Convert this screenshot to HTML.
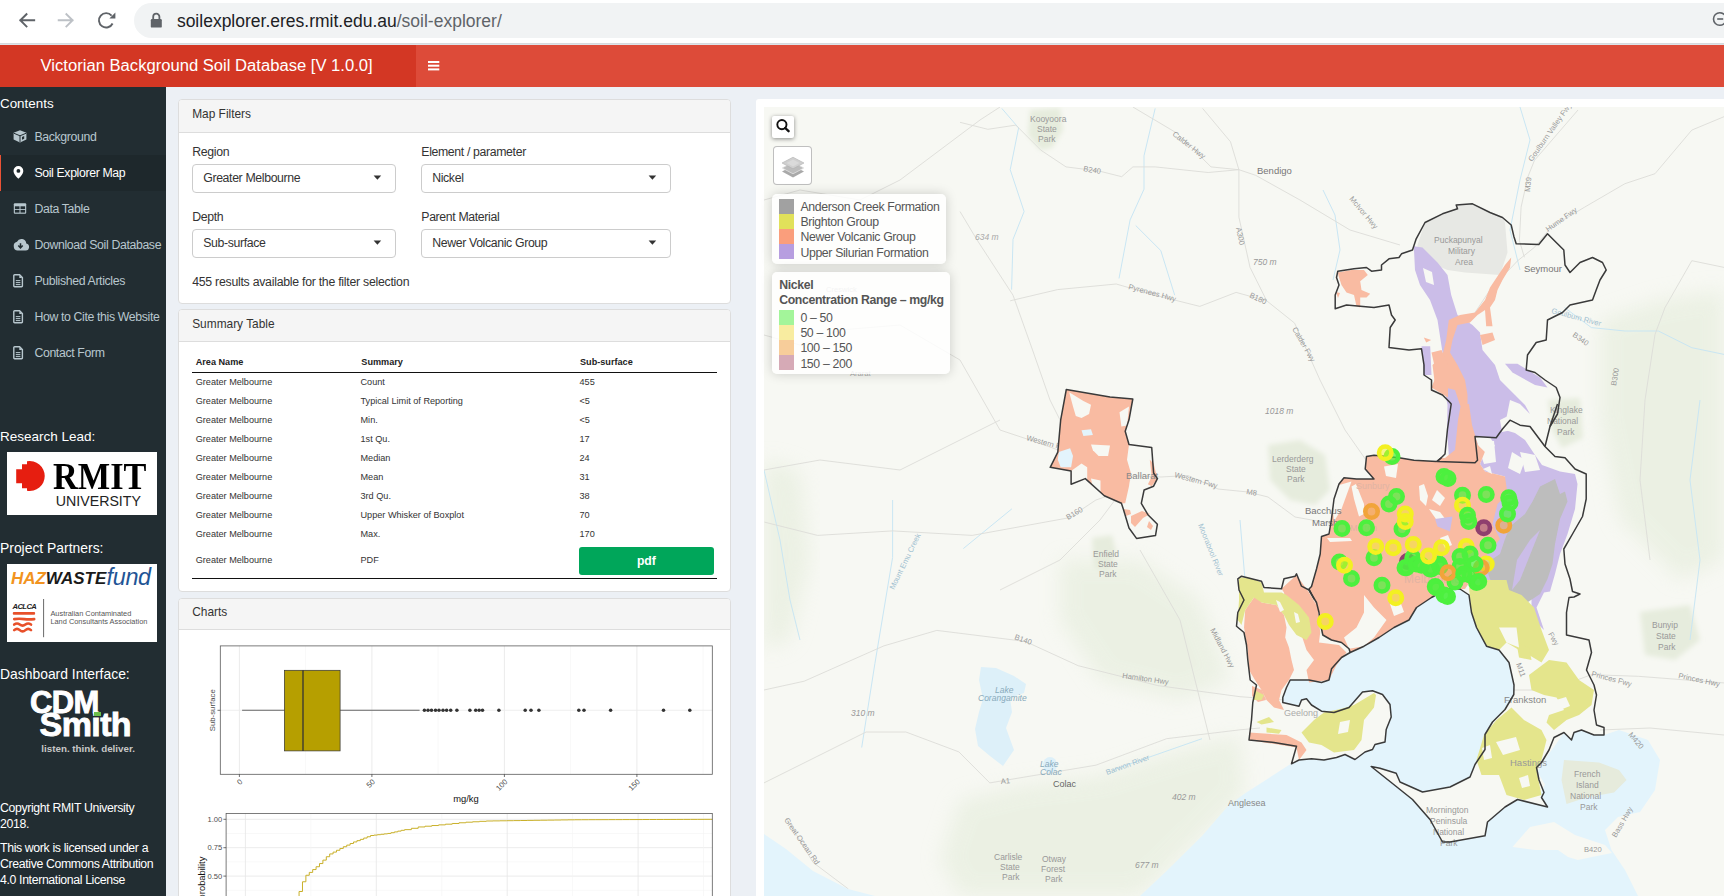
<!DOCTYPE html><html><head><meta charset="utf-8"><style>
html,body{margin:0;padding:0;width:1724px;height:896px;overflow:hidden;background:#ecf0f5;position:relative;font-family:'Liberation Sans',sans-serif}
.t{position:absolute;white-space:nowrap}
svg{position:absolute;overflow:visible}
</style></head><body>
<div style="position:absolute;left:0px;top:0px;width:1724px;height:43px;background:#fff"></div>
<div style="position:absolute;left:0px;top:43px;width:1724px;height:1px;background:#d6d9dd"></div>
<div style="position:absolute;left:0px;top:44px;width:1724px;height:1px;background:#dde3e8"></div>
<div style="position:absolute;left:134px;top:3px;width:1700px;height:35px;background:#f1f3f4;border-radius:17.5px"></div>
<svg style="left:0;top:0" width="140" height="43" viewBox="0 0 140 43">
<g fill="none" stroke-linecap="square">
<path d="M34.2 20.3H20.5M26.5 14.2L20.3 20.3L26.5 26.4" stroke="#5f6368" stroke-width="1.9"/>
<path d="M58.7 20.3H72.4M66.4 14.2L72.6 20.3L66.4 26.4" stroke="#bdc1c6" stroke-width="1.9"/>
<path d="M112.6 23.5A7.2 7.2 0 1 1 111.6 15.6" stroke="#5f6368" stroke-width="1.9" stroke-linecap="butt"/>
</g>
<path d="M115.4 12.6V18.6H109.4Z" fill="#5f6368"/>
</svg>
<svg style="left:0;top:0" width="170" height="43"><g fill="#5f6368"><rect x="150.8" y="19" width="11" height="8.6" rx="1.2"/><path d="M153.2 19.5V16.8A3.1 3.1 0 0 1 159.4 16.8V19.5" fill="none" stroke="#5f6368" stroke-width="1.8"/></g></svg>
<div class="t" style="left:176.9px;top:9.84px;font:400 17.5px/22px 'Liberation Sans',sans-serif;color:#202124;"><span style="color:#202124">soilexplorer.eres.rmit.edu.au</span><span style="color:#5f6368">/soil-explorer/</span></div>
<svg style="left:1700px;top:0" width="24" height="43"><circle cx="19.8" cy="19" r="6.3" fill="none" stroke="#5f6368" stroke-width="1.6"/><path d="M17.2 19H23.2" stroke="#5f6368" stroke-width="1.6"/></svg>
<div style="position:absolute;left:0px;top:45px;width:416px;height:42px;background:#d33724"></div>
<div style="position:absolute;left:416px;top:45px;width:1308px;height:42px;background:#dd4b39"></div>
<div class="t" style="left:40.6px;top:54.74px;font:400 16.62px/21px 'Liberation Sans',sans-serif;color:#fff;">Victorian Background Soil Database [V 1.0.0]</div>
<svg style="left:420px;top:55px" width="24" height="24"><g fill="#fff"><rect x="8" y="6" width="11.3" height="2"/><rect x="8" y="9.7" width="11.3" height="2"/><rect x="8" y="13.4" width="11.3" height="2"/></g></svg>
<div style="position:absolute;left:0px;top:87px;width:166px;height:809px;background:#222d32"></div>
<div class="t" style="left:0px;top:94.76px;font:400 13.4px/17px 'Liberation Sans',sans-serif;color:#fff;">Contents</div>
<div style="position:absolute;left:0px;top:155px;width:166px;height:36px;background:#1e282c"></div>
<div style="position:absolute;left:0px;top:155px;width:1.25px;height:36px;background:#ea5235"></div>
<div class="t" style="left:34.4px;top:128.84px;font:400 12.3px/16px 'Liberation Sans',sans-serif;color:#b8c7ce;letter-spacing:-0.36px;">Background</div>
<div class="t" style="left:34.4px;top:164.84px;font:400 12.3px/16px 'Liberation Sans',sans-serif;color:#fff;letter-spacing:-0.36px;">Soil Explorer Map</div>
<div class="t" style="left:34.4px;top:200.84px;font:400 12.3px/16px 'Liberation Sans',sans-serif;color:#b8c7ce;letter-spacing:-0.36px;">Data Table</div>
<div class="t" style="left:34.4px;top:236.84px;font:400 12.3px/16px 'Liberation Sans',sans-serif;color:#b8c7ce;letter-spacing:-0.36px;">Download Soil Database</div>
<div class="t" style="left:34.4px;top:272.84px;font:400 12.3px/16px 'Liberation Sans',sans-serif;color:#b8c7ce;letter-spacing:-0.36px;">Published Articles</div>
<div class="t" style="left:34.4px;top:308.84px;font:400 12.3px/16px 'Liberation Sans',sans-serif;color:#b8c7ce;letter-spacing:-0.36px;">How to Cite this Website</div>
<div class="t" style="left:34.4px;top:344.84px;font:400 12.3px/16px 'Liberation Sans',sans-serif;color:#b8c7ce;letter-spacing:-0.36px;">Contact Form</div>
<svg style="left:0;top:120px" width="40" height="250" viewBox="0 120 40 250">
<g fill="#b8c7ce">
<path d="M20 130.2L26.4 132.8V139.6L20 142.4L13.6 139.6V132.8Z"/>
</g>
<path d="M13.8 133.2L20 135.8L26.2 133.2M20 135.8V142" stroke="#222d32" stroke-width="1" fill="none"/>
<path d="M22 137l2.2-0.9v2.6l-2.2 1z" fill="#222d32"/>
<path d="M18.4 166A4.9 4.9 0 0 0 13.5 170.9C13.5 174.4 18.4 178.7 18.4 178.7C18.4 178.7 23.3 174.4 23.3 170.9A4.9 4.9 0 0 0 18.4 166Z" fill="#fff"/>
<circle cx="18.4" cy="170.9" r="1.9" fill="#1e282c"/>
<g fill="#b8c7ce"><rect x="13.8" y="203.2" width="12.4" height="10.5" rx="1"/></g>
<g fill="#222d32"><rect x="14.9" y="206.3" width="4.6" height="2.8"/><rect x="20.5" y="206.3" width="4.6" height="2.8"/><rect x="14.9" y="210" width="4.6" height="2.6"/><rect x="20.5" y="210" width="4.6" height="2.6"/></g>
<path d="M17.5 250.5H25.7A3.6 3.6 0 0 0 26.3 243.4A4.9 4.9 0 0 0 17 241.8A4.4 4.4 0 0 0 13.8 246.8A3.6 3.6 0 0 0 17.5 250.5Z" fill="#b8c7ce"/>
<path d="M20.5 243.2V247.5M18.3 245.6L20.5 248L22.7 245.6" stroke="#222d32" stroke-width="1.5" fill="none"/>
</svg>
<svg style="left:13.4px;top:274.2px" width="11" height="14"><path d="M1.6 0.8H6.6L9.4 3.6V11.9A0.8 0.8 0 0 1 8.6 12.7H1.6A0.8 0.8 0 0 1 0.8 11.9V1.6A0.8 0.8 0 0 1 1.6 0.8Z" fill="none" stroke="#b8c7ce" stroke-width="1.4"/><path d="M6.3 0.9V3.9H9.3Z" fill="#b8c7ce"/><path d="M2.8 6.6H7.4M2.8 8.6H7.4M2.8 10.6H7.4" stroke="#b8c7ce" stroke-width="1"/></svg>
<svg style="left:13.4px;top:310.2px" width="11" height="14"><path d="M1.6 0.8H6.6L9.4 3.6V11.9A0.8 0.8 0 0 1 8.6 12.7H1.6A0.8 0.8 0 0 1 0.8 11.9V1.6A0.8 0.8 0 0 1 1.6 0.8Z" fill="none" stroke="#b8c7ce" stroke-width="1.4"/><path d="M6.3 0.9V3.9H9.3Z" fill="#b8c7ce"/><path d="M2.8 6.6H7.4M2.8 8.6H7.4M2.8 10.6H7.4" stroke="#b8c7ce" stroke-width="1"/></svg>
<svg style="left:13.4px;top:346.2px" width="11" height="14"><path d="M1.6 0.8H6.6L9.4 3.6V11.9A0.8 0.8 0 0 1 8.6 12.7H1.6A0.8 0.8 0 0 1 0.8 11.9V1.6A0.8 0.8 0 0 1 1.6 0.8Z" fill="none" stroke="#b8c7ce" stroke-width="1.4"/><path d="M6.3 0.9V3.9H9.3Z" fill="#b8c7ce"/><path d="M2.8 6.6H7.4M2.8 8.6H7.4M2.8 10.6H7.4" stroke="#b8c7ce" stroke-width="1"/></svg>
<div class="t" style="left:0px;top:427.72px;font:400 13.5px/17px 'Liberation Sans',sans-serif;color:#fff;">Research Lead:</div>
<div class="t" style="left:0px;top:538.88px;font:400 13.9px/18px 'Liberation Sans',sans-serif;color:#fff;">Project Partners:</div>
<div class="t" style="left:0px;top:664.93px;font:400 13.9px/18px 'Liberation Sans',sans-serif;color:#fff;">Dashboard Interface:</div>
<div class="t" style="left:0px;top:799.64px;font:400 12.3px/16px 'Liberation Sans',sans-serif;color:#fff;letter-spacing:-0.36px;">Copyright RMIT University</div>
<div class="t" style="left:0px;top:815.64px;font:400 12.3px/16px 'Liberation Sans',sans-serif;color:#fff;letter-spacing:-0.36px;">2018.</div>
<div class="t" style="left:0px;top:840.04px;font:400 12.3px/16px 'Liberation Sans',sans-serif;color:#fff;letter-spacing:-0.36px;">This work is licensed under a</div>
<div class="t" style="left:0px;top:856.14px;font:400 12.3px/16px 'Liberation Sans',sans-serif;color:#fff;letter-spacing:-0.36px;">Creative Commons Attribution</div>
<div class="t" style="left:0px;top:872.34px;font:400 12.3px/16px 'Liberation Sans',sans-serif;color:#fff;letter-spacing:-0.36px;">4.0 International License</div>
<div style="position:absolute;left:7px;top:452px;width:150px;height:63px;background:#fff"></div>
<svg style="left:7px;top:452px" width="150" height="63">
<path d="M20 9.3A15 15 0 1 1 20 38.8V36.3H15V31.3H9.2V17.3H15V12.3H20Z" fill="#e61e10"/>
</svg>
<div class="t" style="left:52.8px;top:452.54px;font:700 37.5px/47px 'Liberation Serif',sans-serif;color:#000;transform:scaleX(0.915);transform-origin:left;letter-spacing:0px">RMIT</div>
<div class="t" style="left:55.8px;top:491.68px;font:400 14.2px/18px 'Liberation Sans',sans-serif;color:#222;letter-spacing:0px">UNIVERSITY</div>
<div style="position:absolute;left:7px;top:564px;width:150px;height:78px;background:#fff"></div>
<div class="t" style="left:10.9px;top:567.91px;font:700 17px/22px 'Liberation Sans',sans-serif;color:#333;font-style:italic;letter-spacing:0px"><span style="color:#f29320">HAZ</span><span style="color:#1a1a1a">WASTE</span></div>
<div class="t" style="left:106.5px;top:561.69px;font:400 23.4px/30px 'Liberation Sans',sans-serif;color:#1f5596;font-style:italic;letter-spacing:-0.3px">fund</div>
<svg style="left:7px;top:564px" width="150" height="78">
<rect x="5.8" y="48.1" width="22.3" height="2.7" rx="1" fill="#e8502a"/>
<g fill="none" stroke="#e8502a" stroke-width="2.6" stroke-linecap="round">
<path d="M7.2 55.1q5 -0.6 10 0t10 0"/>
<path d="M7.2 60.6q2.8-2.2 5.6 0t5.6 0t5.6 0"/>
<path d="M7.2 66.1q2.8-2.6 5.6 0t5.6 0t5.6 0"/>
</g>
<rect x="36" y="35" width="1.1" height="38.2" fill="#777"/>
</svg>
<div class="t" style="left:12.6px;top:602.17px;font:700 7.6px/10px 'Liberation Sans',sans-serif;color:#222;letter-spacing:-0.6px;font-style:italic">ACLCA</div>
<div class="t" style="left:50.4px;top:608.54px;font:400 7.4px/10px 'Liberation Sans',sans-serif;color:#555;">Australian Contaminated</div>
<div class="t" style="left:50.4px;top:617.04px;font:400 7.4px/10px 'Liberation Sans',sans-serif;color:#555;">Land Consultants Association</div>
<div class="t" style="left:29.9px;top:682.76px;font:700 31px/39px 'Liberation Sans',sans-serif;color:#fff;letter-spacing:-0.6px;-webkit-text-stroke:0.9px #fff">CDM</div>
<div class="t" style="left:39.6px;top:702.62px;font:700 34px/43px 'Liberation Sans',sans-serif;color:#fff;letter-spacing:-0.6px;-webkit-text-stroke:0.9px #fff">Smith</div>
<div style="position:absolute;left:94px;top:711.5px;width:7px;height:4px;background:#6abf4b"></div>
<div class="t" style="left:41.3px;top:741.80px;font:700 9.8px/13px 'Liberation Sans',sans-serif;color:#c8c8c8;letter-spacing:0px">listen. think. deliver.</div>
<div style="position:absolute;left:178px;top:99px;width:553px;height:205px;background:#fff;border:1px solid #ddd;box-sizing:border-box;border-radius:4px"></div>
<div style="position:absolute;left:179px;top:100px;width:551px;height:32px;background:#f5f5f5;border-bottom:1px solid #ddd;border-radius:3px 3px 0 0"></div>
<div class="t" style="left:192.2px;top:107.18px;font:400 11.9px/15px 'Liberation Sans',sans-serif;color:#333;">Map Filters</div>
<div style="position:absolute;left:178px;top:309px;width:553px;height:283px;background:#fff;border:1px solid #ddd;box-sizing:border-box;border-radius:4px"></div>
<div style="position:absolute;left:179px;top:310px;width:551px;height:31px;background:#f5f5f5;border-bottom:1px solid #ddd;border-radius:3px 3px 0 0"></div>
<div class="t" style="left:192.2px;top:316.78px;font:400 11.9px/15px 'Liberation Sans',sans-serif;color:#333;">Summary Table</div>
<div style="position:absolute;left:178px;top:598px;width:553px;height:322px;background:#fff;border:1px solid #ddd;box-sizing:border-box;border-radius:4px"></div>
<div style="position:absolute;left:179px;top:599px;width:551px;height:30px;background:#f5f5f5;border-bottom:1px solid #ddd;border-radius:3px 3px 0 0"></div>
<div class="t" style="left:192.2px;top:605.28px;font:400 11.9px/15px 'Liberation Sans',sans-serif;color:#333;">Charts</div>
<div class="t" style="left:192.3px;top:143.84px;font:400 12.3px/16px 'Liberation Sans',sans-serif;color:#333;letter-spacing:-0.36px;">Region</div>
<div class="t" style="left:421.3px;top:143.84px;font:400 12.3px/16px 'Liberation Sans',sans-serif;color:#333;letter-spacing:-0.36px;">Element / parameter</div>
<div style="position:absolute;left:192px;top:164px;width:204px;height:28.5px;background:#fff;border:1px solid #ccc;box-sizing:border-box;border-radius:4px"></div>
<div class="t" style="left:203.2px;top:170.04px;font:400 12.3px/16px 'Liberation Sans',sans-serif;color:#333;letter-spacing:-0.36px;">Greater Melbourne</div>
<svg style="left:373px;top:175px" width="10" height="6"><path d="M0.6 0.6H8.2L4.4 4.8Z" fill="#333"/></svg>
<div style="position:absolute;left:421px;top:164.3px;width:250px;height:28.5px;background:#fff;border:1px solid #ccc;box-sizing:border-box;border-radius:4px"></div>
<div class="t" style="left:432.2px;top:170.44px;font:400 12.3px/16px 'Liberation Sans',sans-serif;color:#333;letter-spacing:-0.36px;">Nickel</div>
<svg style="left:648px;top:175.3px" width="10" height="6"><path d="M0.6 0.6H8.2L4.4 4.8Z" fill="#333"/></svg>
<div class="t" style="left:192.3px;top:209.14px;font:400 12.3px/16px 'Liberation Sans',sans-serif;color:#333;letter-spacing:-0.36px;">Depth</div>
<div class="t" style="left:421.3px;top:209.14px;font:400 12.3px/16px 'Liberation Sans',sans-serif;color:#333;letter-spacing:-0.36px;">Parent Material</div>
<div style="position:absolute;left:192px;top:229.3px;width:204px;height:28.5px;background:#fff;border:1px solid #ccc;box-sizing:border-box;border-radius:4px"></div>
<div class="t" style="left:203.2px;top:235.24px;font:400 12.3px/16px 'Liberation Sans',sans-serif;color:#333;letter-spacing:-0.36px;">Sub-surface</div>
<svg style="left:373px;top:240.3px" width="10" height="6"><path d="M0.6 0.6H8.2L4.4 4.8Z" fill="#333"/></svg>
<div style="position:absolute;left:421px;top:229.3px;width:250px;height:28.5px;background:#fff;border:1px solid #ccc;box-sizing:border-box;border-radius:4px"></div>
<div class="t" style="left:432.2px;top:235.24px;font:400 12.3px/16px 'Liberation Sans',sans-serif;color:#333;letter-spacing:-0.36px;">Newer Volcanic Group</div>
<svg style="left:648px;top:240.3px" width="10" height="6"><path d="M0.6 0.6H8.2L4.4 4.8Z" fill="#333"/></svg>
<div class="t" style="left:192.2px;top:274.04px;font:400 12.3px/16px 'Liberation Sans',sans-serif;color:#333;letter-spacing:-0.36px;letter-spacing:-0.26px">455 results available for the filter selection</div>
<div class="t" style="left:195.7px;top:355.83px;font:700 9.15px/12px 'Liberation Sans',sans-serif;color:#222;">Area Name</div>
<div class="t" style="left:361.3px;top:355.83px;font:700 9.15px/12px 'Liberation Sans',sans-serif;color:#222;">Summary</div>
<div class="t" style="left:580px;top:355.83px;font:700 9.15px/12px 'Liberation Sans',sans-serif;color:#222;">Sub-surface</div>
<div style="position:absolute;left:192px;top:372px;width:524.5px;height:1.3px;background:#111"></div>
<div class="t" style="left:195.7px;top:375.63px;font:400 9.15px/12px 'Liberation Sans',sans-serif;color:#333;">Greater Melbourne</div>
<div class="t" style="left:360.5px;top:375.63px;font:400 9.15px/12px 'Liberation Sans',sans-serif;color:#333;">Count</div>
<div class="t" style="left:579.5px;top:375.63px;font:400 9.15px/12px 'Liberation Sans',sans-serif;color:#333;">455</div>
<div class="t" style="left:195.7px;top:394.71px;font:400 9.15px/12px 'Liberation Sans',sans-serif;color:#333;">Greater Melbourne</div>
<div class="t" style="left:360.5px;top:394.71px;font:400 9.15px/12px 'Liberation Sans',sans-serif;color:#333;">Typical Limit of Reporting</div>
<div class="t" style="left:579.5px;top:394.71px;font:400 9.15px/12px 'Liberation Sans',sans-serif;color:#333;">&lt;5</div>
<div class="t" style="left:195.7px;top:413.79px;font:400 9.15px/12px 'Liberation Sans',sans-serif;color:#333;">Greater Melbourne</div>
<div class="t" style="left:360.5px;top:413.79px;font:400 9.15px/12px 'Liberation Sans',sans-serif;color:#333;">Min.</div>
<div class="t" style="left:579.5px;top:413.79px;font:400 9.15px/12px 'Liberation Sans',sans-serif;color:#333;">&lt;5</div>
<div class="t" style="left:195.7px;top:432.87px;font:400 9.15px/12px 'Liberation Sans',sans-serif;color:#333;">Greater Melbourne</div>
<div class="t" style="left:360.5px;top:432.87px;font:400 9.15px/12px 'Liberation Sans',sans-serif;color:#333;">1st Qu.</div>
<div class="t" style="left:579.5px;top:432.87px;font:400 9.15px/12px 'Liberation Sans',sans-serif;color:#333;">17</div>
<div class="t" style="left:195.7px;top:451.95px;font:400 9.15px/12px 'Liberation Sans',sans-serif;color:#333;">Greater Melbourne</div>
<div class="t" style="left:360.5px;top:451.95px;font:400 9.15px/12px 'Liberation Sans',sans-serif;color:#333;">Median</div>
<div class="t" style="left:579.5px;top:451.95px;font:400 9.15px/12px 'Liberation Sans',sans-serif;color:#333;">24</div>
<div class="t" style="left:195.7px;top:471.03px;font:400 9.15px/12px 'Liberation Sans',sans-serif;color:#333;">Greater Melbourne</div>
<div class="t" style="left:360.5px;top:471.03px;font:400 9.15px/12px 'Liberation Sans',sans-serif;color:#333;">Mean</div>
<div class="t" style="left:579.5px;top:471.03px;font:400 9.15px/12px 'Liberation Sans',sans-serif;color:#333;">31</div>
<div class="t" style="left:195.7px;top:490.11px;font:400 9.15px/12px 'Liberation Sans',sans-serif;color:#333;">Greater Melbourne</div>
<div class="t" style="left:360.5px;top:490.11px;font:400 9.15px/12px 'Liberation Sans',sans-serif;color:#333;">3rd Qu.</div>
<div class="t" style="left:579.5px;top:490.11px;font:400 9.15px/12px 'Liberation Sans',sans-serif;color:#333;">38</div>
<div class="t" style="left:195.7px;top:509.19px;font:400 9.15px/12px 'Liberation Sans',sans-serif;color:#333;">Greater Melbourne</div>
<div class="t" style="left:360.5px;top:509.19px;font:400 9.15px/12px 'Liberation Sans',sans-serif;color:#333;">Upper Whisker of Boxplot</div>
<div class="t" style="left:579.5px;top:509.19px;font:400 9.15px/12px 'Liberation Sans',sans-serif;color:#333;">70</div>
<div class="t" style="left:195.7px;top:528.27px;font:400 9.15px/12px 'Liberation Sans',sans-serif;color:#333;">Greater Melbourne</div>
<div class="t" style="left:360.5px;top:528.27px;font:400 9.15px/12px 'Liberation Sans',sans-serif;color:#333;">Max.</div>
<div class="t" style="left:579.5px;top:528.27px;font:400 9.15px/12px 'Liberation Sans',sans-serif;color:#333;">170</div>
<div class="t" style="left:195.7px;top:553.73px;font:400 9.15px/12px 'Liberation Sans',sans-serif;color:#333;">Greater Melbourne</div>
<div class="t" style="left:360.5px;top:553.73px;font:400 9.15px/12px 'Liberation Sans',sans-serif;color:#333;">PDF</div>
<div style="position:absolute;left:579.2px;top:547px;width:134.5px;height:27.5px;background:#00a65a;border-radius:3px"></div>
<div class="t" style="left:616.4px;width:60px;text-align:center;top:552.97px;font:700 12.2px/16px 'Liberation Sans',sans-serif;color:#fff;">pdf</div>
<div style="position:absolute;left:192px;top:578px;width:524.5px;height:1.3px;background:#111"></div>
<svg style="left:179px;top:630px" width="551" height="266" viewBox="179 630 551 266"><g font-family="Liberation Sans">
<rect x="220.3" y="645.9" width="492" height="128.4" fill="#fff"/>
<line x1="305.6" y1="645.9" x2="305.6" y2="774.3" stroke="#f3f3f3" stroke-width="0.6"/>
<line x1="438.1" y1="645.9" x2="438.1" y2="774.3" stroke="#f3f3f3" stroke-width="0.6"/>
<line x1="570.6" y1="645.9" x2="570.6" y2="774.3" stroke="#f3f3f3" stroke-width="0.6"/>
<line x1="703.1" y1="645.9" x2="703.1" y2="774.3" stroke="#f3f3f3" stroke-width="0.6"/>
<line x1="239.4" y1="645.9" x2="239.4" y2="774.3" stroke="#e6e6e6" stroke-width="0.8"/>
<line x1="371.9" y1="645.9" x2="371.9" y2="774.3" stroke="#e6e6e6" stroke-width="0.8"/>
<line x1="504.4" y1="645.9" x2="504.4" y2="774.3" stroke="#e6e6e6" stroke-width="0.8"/>
<line x1="636.9" y1="645.9" x2="636.9" y2="774.3" stroke="#e6e6e6" stroke-width="0.8"/>
<line x1="220.3" y1="710.3" x2="712.3" y2="710.3" stroke="#ebebeb" stroke-width="0.8"/>
<line x1="242.1" y1="710.3" x2="284.4" y2="710.3" stroke="#666" stroke-width="1.1"/>
<line x1="340.1" y1="710.3" x2="419.6" y2="710.3" stroke="#666" stroke-width="1.1"/>
<rect x="284.4" y="670.3" width="55.7" height="80.6" fill="#b69f00" stroke="#333" stroke-width="0.7"/>
<line x1="303.0" y1="670.3" x2="303.0" y2="750.9" stroke="#333" stroke-width="1.3"/>
<circle cx="424.4" cy="710.3" r="1.75" fill="#333"/>
<circle cx="428" cy="710.3" r="1.75" fill="#333"/>
<circle cx="431.5" cy="710.3" r="1.75" fill="#333"/>
<circle cx="435.5" cy="710.3" r="1.75" fill="#333"/>
<circle cx="439" cy="710.3" r="1.75" fill="#333"/>
<circle cx="443" cy="710.3" r="1.75" fill="#333"/>
<circle cx="446.6" cy="710.3" r="1.75" fill="#333"/>
<circle cx="450.7" cy="710.3" r="1.75" fill="#333"/>
<circle cx="456.9" cy="710.3" r="1.75" fill="#333"/>
<circle cx="469.9" cy="710.3" r="1.75" fill="#333"/>
<circle cx="475.7" cy="710.3" r="1.75" fill="#333"/>
<circle cx="479.1" cy="710.3" r="1.75" fill="#333"/>
<circle cx="482.5" cy="710.3" r="1.75" fill="#333"/>
<circle cx="498.9" cy="710.3" r="1.75" fill="#333"/>
<circle cx="525.2" cy="710.3" r="1.75" fill="#333"/>
<circle cx="531" cy="710.3" r="1.75" fill="#333"/>
<circle cx="538.9" cy="710.3" r="1.75" fill="#333"/>
<circle cx="578.8" cy="710.3" r="1.75" fill="#333"/>
<circle cx="584" cy="710.3" r="1.75" fill="#333"/>
<circle cx="610.6" cy="710.3" r="1.75" fill="#333"/>
<circle cx="663.5" cy="710.3" r="1.75" fill="#333"/>
<circle cx="689.8" cy="710.3" r="1.75" fill="#333"/>
<rect x="220.3" y="645.9" width="492" height="128.4" fill="none" stroke="#5a5a5a" stroke-width="0.8"/>
<line x1="217.5" y1="710.3" x2="220.3" y2="710.3" stroke="#333" stroke-width="0.7"/>
<line x1="239.4" y1="774.3" x2="239.4" y2="777" stroke="#333" stroke-width="0.7"/>
<text x="0" y="0" font-size="7.6" fill="#4d4d4d" text-anchor="end" transform="translate(243.0 782.3) rotate(-45)">0</text>
<line x1="371.9" y1="774.3" x2="371.9" y2="777" stroke="#333" stroke-width="0.7"/>
<text x="0" y="0" font-size="7.6" fill="#4d4d4d" text-anchor="end" transform="translate(375.5 782.3) rotate(-45)">50</text>
<line x1="504.4" y1="774.3" x2="504.4" y2="777" stroke="#333" stroke-width="0.7"/>
<text x="0" y="0" font-size="7.6" fill="#4d4d4d" text-anchor="end" transform="translate(508.0 782.3) rotate(-45)">100</text>
<line x1="636.9" y1="774.3" x2="636.9" y2="777" stroke="#333" stroke-width="0.7"/>
<text x="0" y="0" font-size="7.6" fill="#4d4d4d" text-anchor="end" transform="translate(640.5 782.3) rotate(-45)">150</text>
<text x="0" y="0" font-size="7.8" fill="#4d4d4d" text-anchor="middle" transform="translate(214.8 710.3) rotate(-90)">Sub-surface</text>
<text x="466" y="801.7" font-size="9.4" fill="#111" text-anchor="middle">mg/kg</text>
<rect x="226.1" y="813.4" width="486.2" height="90" fill="#fff"/>
<line x1="226.1" y1="833.5" x2="712.3" y2="833.5" stroke="#f3f3f3" stroke-width="0.6"/>
<line x1="226.1" y1="861.9" x2="712.3" y2="861.9" stroke="#f3f3f3" stroke-width="0.6"/>
<line x1="226.1" y1="890.3" x2="712.3" y2="890.3" stroke="#f3f3f3" stroke-width="0.6"/>
<line x1="226.1" y1="819.3" x2="712.3" y2="819.3" stroke="#e6e6e6" stroke-width="0.8"/>
<line x1="226.1" y1="847.7" x2="712.3" y2="847.7" stroke="#e6e6e6" stroke-width="0.8"/>
<line x1="226.1" y1="876.1" x2="712.3" y2="876.1" stroke="#e6e6e6" stroke-width="0.8"/>
<line x1="226.1" y1="904.5" x2="712.3" y2="904.5" stroke="#e6e6e6" stroke-width="0.8"/>
<line x1="310.9" y1="813.4" x2="310.9" y2="900" stroke="#f3f3f3" stroke-width="0.6"/>
<line x1="441.8" y1="813.4" x2="441.8" y2="900" stroke="#f3f3f3" stroke-width="0.6"/>
<line x1="572.6" y1="813.4" x2="572.6" y2="900" stroke="#f3f3f3" stroke-width="0.6"/>
<line x1="703.5" y1="813.4" x2="703.5" y2="900" stroke="#f3f3f3" stroke-width="0.6"/>
<line x1="245.4" y1="813.4" x2="245.4" y2="900" stroke="#e6e6e6" stroke-width="0.8"/>
<line x1="376.3" y1="813.4" x2="376.3" y2="900" stroke="#e6e6e6" stroke-width="0.8"/>
<line x1="507.2" y1="813.4" x2="507.2" y2="900" stroke="#e6e6e6" stroke-width="0.8"/>
<line x1="638.1" y1="813.4" x2="638.1" y2="900" stroke="#e6e6e6" stroke-width="0.8"/>
<clipPath id="ec"><rect x="226.1" y="813.4" width="486.2" height="100"/></clipPath>
<path d="M248.02 932.90 H251.42 V931.85 H254.82 V930.79 H258.23 V929.74 H261.63 V928.68 H265.04 V927.63 H268.44 V925.95 H271.84 V923.88 H275.25 V921.81 H278.65 V919.75 H282.05 V915.58 H285.46 V910.78 H288.86 V905.98 H292.26 V901.86 H295.67 V898.04 H299.07 V891.50 H302.47 V881.78 H305.88 V875.25 H309.28 V872.41 H312.68 V869.57 H316.09 V866.74 H319.49 V863.55 H322.89 V860.14 H326.30 V856.73 H329.70 V853.93 H333.10 V852.10 H336.51 V850.28 H339.91 V848.46 H343.31 V846.73 H346.72 V845.11 H350.12 V843.49 H353.52 V841.95 H356.93 V840.65 H360.33 V839.35 H363.73 V838.05 H367.14 V836.75 H370.54 V835.51 H373.94 V835.10 H377.35 V834.69 H380.75 V834.28 H384.15 V833.86 H387.56 V833.45 H390.96 V832.71 H394.36 V831.91 H397.77 V831.12 H401.17 V830.32 H404.57 V829.65 H411.38 V828.30 H418.19 V826.95 H424.99 V826.21 H431.80 V825.54 H438.61 V824.87 H445.42 V824.18 H452.22 V823.48 H459.03 V822.77 H465.84 V822.19 H472.64 V821.77 H479.45 V821.34 H486.26 V820.99 H493.06 V820.89 H499.87 V820.79 H506.68 V820.69 H513.48 V820.60 H520.29 V820.50 H527.10 V820.40 H533.90 V820.31 H540.71 V820.21 H547.52 V820.11 H554.32 V820.02 H561.13 V819.92 H567.94 V819.82 H574.74 V819.75 H581.55 V819.73 H588.36 V819.70 H595.16 V819.68 H601.97 V819.66 H608.78 V819.64 H615.59 V819.61 H622.39 V819.59 H629.20 V819.57 H636.01 V819.55 H642.81 V819.52 H649.62 V819.50 H656.43 V819.48 H663.23 V819.46 H670.04 V819.44 H676.85 V819.41 H683.65 V819.39 H690.46 V819.37 H697.27 V819.35 H704.07 V819.32 H710.88 V819.30 H717.69 V819.30" fill="none" stroke="#c9b02a" stroke-width="1" clip-path="url(#ec)"/>
<rect x="226.1" y="813.4" width="486.2" height="100" fill="none" stroke="#5a5a5a" stroke-width="0.8"/>
<line x1="223.4" y1="819.3" x2="226.1" y2="819.3" stroke="#333" stroke-width="0.7"/>
<text x="222.3" y="822.0" font-size="7.6" fill="#4d4d4d" text-anchor="end">1.00</text>
<line x1="223.4" y1="847.7" x2="226.1" y2="847.7" stroke="#333" stroke-width="0.7"/>
<text x="222.3" y="850.4" font-size="7.6" fill="#4d4d4d" text-anchor="end">0.75</text>
<line x1="223.4" y1="876.1" x2="226.1" y2="876.1" stroke="#333" stroke-width="0.7"/>
<text x="222.3" y="878.8" font-size="7.6" fill="#4d4d4d" text-anchor="end">0.50</text>
<line x1="223.4" y1="904.5" x2="226.1" y2="904.5" stroke="#333" stroke-width="0.7"/>
<text x="222.3" y="907.2" font-size="7.6" fill="#4d4d4d" text-anchor="end">0.25</text>
<text x="0" y="0" font-size="9.4" fill="#111" text-anchor="start" transform="translate(205 850.4) rotate(-90) translate(-49 0)">probability</text>
</g></svg>
<div style="position:absolute;left:756px;top:99px;width:968px;height:797px;background:#fff;border-radius:3px 0 0 0"></div>
<svg style="left:764px;top:107px" width="960" height="789" viewBox="764 107 960 789"><defs><filter id="bl" x="-20%" y="-20%" width="140%" height="140%"><feGaussianBlur stdDeviation="10"/></filter><filter id="bl2" x="-20%" y="-20%" width="140%" height="140%"><feGaussianBlur stdDeviation="2.5"/></filter><clipPath id="mc"><rect x="764" y="107" width="960" height="789"/></clipPath></defs><g clip-path="url(#mc)">
<rect x="764" y="107" width="960" height="789" fill="#f7f8f3"/>
<path d="M960.0 800.0 L1020.0 785.0 L1100.0 775.0 L1180.0 750.0 L1240.0 735.0 L1244.0 794.0 L1202.0 836.0 L1166.0 871.0 L1140.0 896.0 L960.0 896.0 L940.0 860.0Z" fill="#e4ecda" opacity="0.6" filter="url(#bl)"/>
<path d="M764.0 460.0 L800.0 470.0 L810.0 560.0 L790.0 640.0 L764.0 650.0Z" fill="#e4ecda" opacity="0.6" filter="url(#bl)"/>
<path d="M1600.0 320.0 L1660.0 300.0 L1724.0 290.0 L1724.0 560.0 L1680.0 580.0 L1620.0 520.0 L1600.0 420.0Z" fill="#e4ecda" opacity="0.6" filter="url(#bl)"/>
<path d="M1060.0 560.0 L1140.0 560.0 L1200.0 600.0 L1230.0 680.0 L1180.0 700.0 L1100.0 680.0 L1060.0 620.0Z" fill="#e4ecda" opacity="0.6" filter="url(#bl)"/>
<path d="M1030.0 110.0 L1060.0 108.0 L1063.0 130.0 L1052.0 148.0 L1040.0 150.0 L1028.0 135.0Z" fill="#e6ecdd" filter="url(#bl2)"/>
<path d="M1268.0 445.0 L1300.0 440.0 L1325.0 455.0 L1330.0 490.0 L1315.0 505.0 L1290.0 500.0 L1270.0 480.0Z" fill="#e6ecdd" filter="url(#bl2)"/>
<path d="M1092.0 538.0 L1112.0 535.0 L1116.0 552.0 L1108.0 572.0 L1094.0 568.0Z" fill="#e6ecdd" filter="url(#bl2)"/>
<path d="M1548.0 400.0 L1580.0 398.0 L1583.0 438.0 L1562.0 448.0 L1552.0 430.0Z" fill="#e6ecdd" filter="url(#bl2)"/>
<path d="M1640.0 612.0 L1690.0 605.0 L1700.0 640.0 L1675.0 660.0 L1645.0 655.0Z" fill="#e6ecdd" filter="url(#bl2)"/>
<path d="M1417.5 245.0 L1425.0 222.5 L1442.5 213.8 L1457.5 208.8 L1456.2 205.0 L1472.5 203.8 L1490.0 212.5 L1502.5 217.5 L1505.0 222.5 L1507.5 252.5 L1500.0 275.0 L1465.0 272.5 L1447.5 270.0 L1417.5 257.5Z" fill="#e7e8e4"/>
<path d="M1001.8 108.4 L1018.6 127.9 L1010.2 169.7 L1024.1 211.5 L1013.0 239.4 L1011.6 289.6" fill="none" stroke="#c9e6f3" stroke-width="1"/>
<path d="M1155.2 108.4 L1144.0 155.8 L1144.0 189.2 L1130.1 219.9 L1119.0 278.5" fill="none" stroke="#c9e6f3" stroke-width="1"/>
<path d="M1135.7 225.5 L1160.8 250.6 L1174.7 295.2" fill="none" stroke="#c9e6f3" stroke-width="1"/>
<path d="M892.6 500.0 L892.6 557.5 L874.9 663.5 L861.7 747.5" fill="none" stroke="#c9e6f3" stroke-width="1"/>
<path d="M1011.9 508.8 L963.3 548.6" fill="none" stroke="#c9e6f3" stroke-width="1"/>
<path d="M1113.6 769.6 L1202.0 738.7" fill="none" stroke="#c9e6f3" stroke-width="1"/>
<path d="M1564.6 307.6 L1591.4 327.6 L1624.9 331.0 L1658.4 331.0 L1691.8 347.7 L1724.0 354.4" fill="none" stroke="#c9e6f3" stroke-width="1"/>
<path d="M764.0 470.0 L780.0 540.0 L790.0 600.0 L800.0 640.0" fill="none" stroke="#c9e6f3" stroke-width="1"/>
<path d="M1520.0 107.0 L1530.0 140.0 L1520.0 180.0 L1510.0 230.0 L1520.0 270.0" fill="none" stroke="#c9e6f3" stroke-width="1"/>
<path d="M1323.0 190.0 L1335.0 215.0 L1340.0 250.0 L1333.0 280.0" fill="none" stroke="#c9e6f3" stroke-width="1"/>
<path d="M1240.0 520.0 L1245.0 580.0 L1250.0 620.0 L1256.0 680.0" fill="none" stroke="#c9e6f3" stroke-width="1"/>
<path d="M1700.0 400.0 L1690.0 480.0 L1700.0 560.0 L1690.0 640.0" fill="none" stroke="#c9e6f3" stroke-width="1"/>
<path d="M764.0 335.0 L800.0 345.0 L840.0 330.0 L900.0 325.0 L960.0 360.0 L1000.0 430.0 L1027.0 439.0 L1050.0 447.0 L1127.0 475.5 L1161.0 477.0 L1188.0 475.5 L1218.0 489.0 L1248.0 492.0 L1268.0 497.0 L1295.0 517.0 L1340.0 525.0 L1400.0 540.0 L1450.0 570.0" fill="none" stroke="#dcdcd8" stroke-width="0.9"/>
<path d="M960.0 122.3 L987.9 129.3 L1015.8 125.1 L1040.9 150.2 L1066.0 166.9 L1099.4 171.1 L1121.7 176.7 L1132.9 166.9 L1155.2 166.9 L1208.2 172.5 L1238.9 169.7 L1255.6 175.3 L1300.0 200.0 L1350.0 230.0 L1400.0 245.0" fill="none" stroke="#dcdcd8" stroke-width="0.9"/>
<path d="M1132.9 107.0 L1177.5 133.5 L1211.0 166.9 L1238.9 169.7" fill="none" stroke="#dcdcd8" stroke-width="0.9"/>
<path d="M1202.6 108.4 L1230.5 141.8 L1238.9 169.7 L1238.9 217.1 L1250.0 267.3 L1266.7 300.8 L1294.6 323.1 L1320.0 380.0 L1345.0 430.0 L1380.0 480.0 L1420.0 530.0 L1445.0 570.0" fill="none" stroke="#dcdcd8" stroke-width="0.9"/>
<path d="M1010.2 300.8 L1057.6 289.6 L1116.2 284.0 L1155.2 295.2 L1199.8 306.4 L1236.1 292.4 L1266.7 300.8" fill="none" stroke="#dcdcd8" stroke-width="0.9"/>
<path d="M960.0 211.5 L976.7 239.4 L1013.0 295.2 L1032.5 349.9 L1050.0 400.0 L1065.0 430.0" fill="none" stroke="#dcdcd8" stroke-width="0.9"/>
<path d="M764.4 522.1 L817.5 535.4 L892.6 530.9 L972.2 535.4 L1069.4 517.7 L1095.9 500.0 L1125.0 490.0" fill="none" stroke="#dcdcd8" stroke-width="0.9"/>
<path d="M764.0 690.0 L804.2 681.2 L883.8 645.9 L936.8 630.4 L1025.2 641.4 L1078.2 665.7 L1157.8 685.6 L1240.0 696.7 L1285.0 700.0" fill="none" stroke="#dcdcd8" stroke-width="0.9"/>
<path d="M764.0 782.9 L866.1 732.0 L905.9 732.0 L958.9 751.9 L989.8 782.9 L1042.9 774.0 L1095.9 765.2 L1166.6 738.7 L1240.0 729.8 L1260.0 728.0" fill="none" stroke="#dcdcd8" stroke-width="0.9"/>
<path d="M786.5 818.2 L813.0 862.4 L848.4 889.0" fill="none" stroke="#dcdcd8" stroke-width="0.9"/>
<path d="M764.0 200.0 L800.0 190.0 L860.0 200.0 L900.0 180.0 L940.0 150.0 L980.0 120.0 L1000.0 107.0" fill="none" stroke="#dcdcd8" stroke-width="0.9"/>
<path d="M1578.0 110.0 L1534.5 160.3 L1527.8 177.0 L1521.1 207.1 L1519.4 240.6 L1524.4 257.3" fill="none" stroke="#dcdcd8" stroke-width="0.9"/>
<path d="M1724.0 116.7 L1691.8 130.1 L1655.0 173.7 L1624.9 183.7 L1584.7 207.1 L1551.2 227.2 L1534.5 247.3 L1517.7 260.7 L1490.0 290.0 L1470.0 320.0 L1455.0 360.0 L1450.0 420.0" fill="none" stroke="#dcdcd8" stroke-width="0.9"/>
<path d="M1724.0 267.4 L1691.8 260.7 L1665.0 307.6 L1655.0 334.4 L1645.0 400.0 L1640.0 480.0 L1650.0 560.0" fill="none" stroke="#dcdcd8" stroke-width="0.9"/>
<path d="M1725.0 683.0 L1638.3 676.3 L1591.4 674.7 L1550.0 690.0 L1510.0 690.0" fill="none" stroke="#dcdcd8" stroke-width="0.9"/>
<path d="M1600.0 730.0 L1650.0 728.0 L1724.0 735.0" fill="none" stroke="#dcdcd8" stroke-width="0.9"/>
<path d="M1130.0 480.0 L1100.0 520.0 L1060.0 560.0 L1000.0 590.0" fill="none" stroke="#dcdcd8" stroke-width="0.9"/>
<path d="M1140.0 550.0 L1180.0 620.0 L1200.0 700.0 L1210.0 740.0" fill="none" stroke="#dcdcd8" stroke-width="0.9"/>
<path d="M764.0 470.0 L820.0 460.0 L900.0 470.0 L1000.0 420.0" fill="none" stroke="#dcdcd8" stroke-width="0.9"/>
<path d="M764.0 834.0 L786.0 849.0 L813.0 871.0 L848.0 889.0 L875.0 896.0 L1140.0 896.0 L1166.6 871.0 L1202.0 836.0 L1228.0 806.0 L1244.0 794.0 L1269.0 778.0 L1289.0 765.0 L1299.0 760.0 L1311.5 758.8 L1324.0 760.0 L1336.5 757.5 L1345.0 754.5 L1355.0 759.5 L1365.0 752.0 L1372.5 749.5 L1371.2 766.5 L1412.5 799.5 L1430.0 819.5 L1442.5 842.0 L1450.0 842.0 L1485.0 835.8 L1487.5 822.0 L1505.0 807.0 L1517.5 799.5 L1547.5 807.0 L1540.0 794.5 L1545.0 784.5 L1537.5 772.0 L1542.5 762.0 L1554.0 747.0 L1564.0 732.5 L1571.5 740.0 L1574.0 732.5 L1581.5 730.0 L1594.0 735.0 L1604.0 735.0 L1619.0 730.0 L1648.0 740.0 L1660.0 760.0 L1655.0 790.0 L1640.0 812.0 L1618.0 817.0 L1605.0 830.0 L1611.5 850.0 L1625.0 870.0 L1638.0 896.0 L764.0 896.0Z" fill="#e3f4fc"/>
<path d="M1372.5 749.5 L1375.0 744.5 L1385.0 742.0 L1386.2 729.5 L1391.2 717.0 L1390.0 704.5 L1382.5 694.5 L1372.5 690.8 L1362.5 692.0 L1349.0 707.5 L1334.0 712.5 L1321.5 711.2 L1311.5 705.0 L1306.5 698.8 L1301.5 700.0 L1299.0 706.2 L1282.8 702.5 L1282.8 697.5 L1286.5 687.5 L1290.2 680.0 L1309.0 680.0 L1321.5 682.5 L1329.0 680.0 L1331.5 668.8 L1341.5 657.5 L1350.2 652.5 L1364.0 646.2 L1379.0 637.5 L1394.0 627.5 L1409.0 620.0 L1416.5 607.5 L1431.5 597.5 L1446.5 589.0 L1460.0 589.0 L1469.0 595.0 L1471.5 612.5 L1476.5 627.5 L1486.5 646.2 L1499.0 650.0 L1509.0 662.5 L1514.0 685.0 L1513.8 694.5 L1505.0 709.5 L1492.5 722.0 L1485.0 734.5 L1485.0 749.5 L1475.0 764.5 L1470.0 777.0 L1450.0 787.0 L1422.5 792.0 L1400.0 782.0 L1396.2 773.2 L1380.0 768.2 L1371.2 766.5Z" fill="#e3f4fc"/>
<path d="M981.0 667.0 L996.0 668.0 L1014.0 676.0 L1026.0 684.0 L1024.0 693.0 L1010.0 698.0 L1012.0 712.0 L1006.0 728.0 L1014.0 750.0 L1003.0 766.0 L990.0 756.0 L978.0 746.0 L975.0 729.0 L979.0 712.0 L983.0 699.0 L979.0 680.0Z" fill="#ddf0f9"/>
<ellipse cx="1050" cy="765" rx="7" ry="8" fill="#ddf0f9"/>
<path d="M1564.0 760.0 L1599.0 762.5 L1619.0 770.0 L1626.5 780.0 L1614.0 792.5 L1586.5 797.5 L1566.5 804.0 L1561.5 780.0Z" fill="#e6ebdc"/>
<path d="M1512.5 847.0 L1530.0 827.0 L1554.0 822.0 L1575.0 835.0 L1605.0 845.0 L1612.0 853.0 L1592.0 857.0 L1578.0 860.0 L1568.0 857.0 L1558.0 850.0 L1535.0 850.0Z" fill="#f7f8f3"/>
<path d="M1413.8 246.2 L1422.5 247.5 L1437.5 262.5 L1447.5 275.0 L1451.2 295.0 L1457.5 315.0 L1472.5 325.0 L1480.0 332.5 L1482.5 350.0 L1495.0 365.0 L1500.0 380.0 L1515.0 395.0 L1525.0 405.0 L1530.0 414.0 L1520.0 404.0 L1510.0 400.0 L1506.0 420.0 L1505.0 430.0 L1515.0 433.0 L1525.0 440.0 L1535.0 455.0 L1542.0 465.0 L1560.0 471.5 L1575.0 474.0 L1577.5 484.0 L1575.0 509.0 L1567.5 534.0 L1560.0 554.0 L1555.0 574.0 L1550.0 591.5 L1544.0 592.5 L1536.5 607.5 L1544.0 630.0 L1539.0 625.0 L1531.5 610.0 L1531.5 595.0 L1525.0 590.0 L1505.0 590.0 L1470.0 586.0 L1478.0 570.0 L1485.0 550.0 L1490.0 530.0 L1492.0 505.0 L1500.0 490.0 L1505.0 476.5 L1485.0 471.5 L1480.0 464.0 L1485.0 451.5 L1480.0 439.0 L1475.0 450.0 L1460.0 458.0 L1449.0 458.0 L1447.0 430.0 L1447.5 405.0 L1443.8 385.0 L1442.5 352.5 L1437.5 320.0 L1430.0 300.0 L1420.0 285.0 L1415.0 270.0Z" fill="#cbbde8"/>
<path d="M1505.0 363.8 L1517.5 363.8 L1540.0 377.5 L1547.5 387.5 L1535.0 385.0 L1512.5 372.5Z" fill="#cbbde8"/>
<path d="M1421.5 346.2 L1430.2 346.2 L1431.5 375.0 L1424.0 375.0Z" fill="#cbbde8"/>
<path d="M1477.0 440.0 L1494.0 441.0 L1496.0 462.0 L1484.0 464.0 L1480.0 452.0Z" fill="#f7f8f3"/>
<path d="M1520.0 452.0 L1535.0 455.0 L1540.0 470.0 L1525.0 472.0Z" fill="#f7f8f3"/>
<path d="M1423.0 268.0 L1432.0 272.0 L1434.0 285.0 L1426.0 282.0Z" fill="#f7f8f3"/>
<path d="M1500.0 420.0 L1510.0 415.0 L1512.0 430.0 L1502.0 432.0Z" fill="#f7f8f3"/>
<path d="M1512.0 452.0 L1525.0 460.0 L1520.0 474.0 L1508.0 468.0Z" fill="#f7f8f3"/>
<path d="M1548.0 500.0 L1556.0 495.0 L1552.0 520.0 L1542.0 522.0Z" fill="#f7f8f3"/>
<path d="M1540.0 486.5 L1555.0 479.0 L1560.0 494.0 L1565.0 491.5 L1567.5 501.5 L1560.0 519.0 L1555.0 544.0 L1552.5 564.0 L1547.5 579.0 L1540.0 594.0 L1525.0 604.0 L1505.0 601.5 L1495.0 589.0 L1490.0 579.0 L1485.0 564.0 L1500.0 554.0 L1505.0 539.0 L1510.0 526.5 L1525.0 514.0 L1532.5 501.5Z" fill="#bdbdbd"/>
<path d="M1517.0 560.0 L1530.0 540.0 L1540.0 530.0 L1528.0 560.0 L1520.0 580.0 L1512.0 590.0Z" fill="#cbbde8"/>
<text x="0" y="0" font-family="Liberation Sans" font-size="7.6" fill="#999" transform="translate(1172 135) rotate(38)">Calder Hwy</text>
<text x="0" y="0" font-family="Liberation Sans" font-size="7.6" fill="#999" transform="translate(1083 171) rotate(10)">B240</text>
<text x="0" y="0" font-family="Liberation Sans" font-size="7.6" fill="#999" transform="translate(1128 289) rotate(15)">Pyrenees Hwy</text>
<text x="0" y="0" font-family="Liberation Sans" font-size="7.6" fill="#999" transform="translate(1236 228) rotate(78)">A300</text>
<text x="0" y="0" font-family="Liberation Sans" font-size="7.6" fill="#999" transform="translate(1249 297) rotate(25)">B180</text>
<text x="0" y="0" font-family="Liberation Sans" font-size="7.6" fill="#999" transform="translate(1026 440) rotate(15)">Western Fwy</text>
<text x="0" y="0" font-family="Liberation Sans" font-size="7.6" fill="#999" transform="translate(1174 477) rotate(15)">Western Fwy</text>
<text x="0" y="0" font-family="Liberation Sans" font-size="7.6" fill="#999" transform="translate(1246 494) rotate(10)">M8</text>
<text x="0" y="0" font-family="Liberation Sans" font-size="7.6" fill="#999" transform="translate(1068 520) rotate(-30)">B160</text>
<text x="0" y="0" font-family="Liberation Sans" font-size="7.6" fill="#9fc0d0" transform="translate(1198 525) rotate(68)">Moorabool River</text>
<text x="0" y="0" font-family="Liberation Sans" font-size="7.6" fill="#999" transform="translate(1210 630) rotate(62)">Midland Hwy</text>
<text x="0" y="0" font-family="Liberation Sans" font-size="7.6" fill="#999" transform="translate(1122 678) rotate(8)">Hamilton Hwy</text>
<text x="0" y="0" font-family="Liberation Sans" font-size="7.6" fill="#999" transform="translate(1014 639) rotate(20)">B140</text>
<text x="0" y="0" font-family="Liberation Sans" font-size="7.6" fill="#999" transform="translate(1001 784) rotate(-5)">A1</text>
<text x="0" y="0" font-family="Liberation Sans" font-size="7.6" fill="#9fc0d0" transform="translate(1107 775) rotate(-20)">Barwon River</text>
<text x="0" y="0" font-family="Liberation Sans" font-size="7.6" fill="#9fc0d0" transform="translate(894 590) rotate(-64)">Mount Emu Creek</text>
<text x="0" y="0" font-family="Liberation Sans" font-size="7.6" fill="#999" transform="translate(784 820) rotate(55)">Great Ocean Rd</text>
<text x="0" y="0" font-family="Liberation Sans" font-size="7.6" fill="#9fc0d0" transform="translate(1551 313) rotate(15)">Goulburn River</text>
<text x="0" y="0" font-family="Liberation Sans" font-size="7.6" fill="#999" transform="translate(1572 336) rotate(35)">B340</text>
<text x="0" y="0" font-family="Liberation Sans" font-size="7.6" fill="#999" transform="translate(1548 232) rotate(-35)">Hume Fwy</text>
<text x="0" y="0" font-family="Liberation Sans" font-size="7.6" fill="#999" transform="translate(1532 162) rotate(-55)">Goulburn Valley Fwy</text>
<text x="0" y="0" font-family="Liberation Sans" font-size="7.6" fill="#999" transform="translate(1530 192) rotate(-85)">M39</text>
<text x="0" y="0" font-family="Liberation Sans" font-size="7.6" fill="#999" transform="translate(1616 386) rotate(-80)">B300</text>
<text x="0" y="0" font-family="Liberation Sans" font-size="7.6" fill="#999" transform="translate(1591 676) rotate(15)">Princes Fwy</text>
<text x="0" y="0" font-family="Liberation Sans" font-size="7.6" fill="#999" transform="translate(1678 678) rotate(12)">Princes Hwy</text>
<text x="0" y="0" font-family="Liberation Sans" font-size="7.6" fill="#999" transform="translate(1628 735) rotate(50)">M420</text>
<text x="0" y="0" font-family="Liberation Sans" font-size="7.6" fill="#999" transform="translate(1616 838) rotate(-60)">Bass Hwy</text>
<text x="0" y="0" font-family="Liberation Sans" font-size="7.6" fill="#999" transform="translate(1584 852) rotate(0)">B420</text>
<text x="0" y="0" font-family="Liberation Sans" font-size="7.6" fill="#999" transform="translate(1548 634) rotate(60)">Fwy</text>
<text x="0" y="0" font-family="Liberation Sans" font-size="7.6" fill="#999" transform="translate(1516 664) rotate(70)">M11</text>
<text x="0" y="0" font-family="Liberation Sans" font-size="7.6" fill="#999" transform="translate(1349 199) rotate(50)">McIvor Hwy</text>
<text x="0" y="0" font-family="Liberation Sans" font-size="7.6" fill="#999" transform="translate(1292 329) rotate(60)">Calder Fwy</text>
<text x="0" y="0" font-family="Liberation Sans" font-size="7.6" fill="#aaa" transform="translate(850 376) rotate(0)">Ararat</text>
<text x="0" y="0" font-family="Liberation Sans" font-size="7.6" fill="#bbb" transform="translate(826 292) rotate(0)">Creswick</text>
<path d="M1066.3 389.5 L1110.0 397.1 L1132.8 399.0 L1129.0 419.8 L1125.2 431.2 L1129.0 444.5 L1127.0 459.7 L1130.9 473.0 L1129.0 486.2 L1125.2 503.3 L1121.4 503.3 L1104.3 495.7 L1085.3 478.6 L1071.1 484.3 L1071.1 471.1 L1050.2 467.3 L1057.8 452.1 L1060.7 419.8Z" fill="#f9bba2"/>
<path d="M1149.8 459.7 L1153.6 463.5 L1157.4 478.6 L1151.7 486.2 L1147.9 484.3 L1151.7 476.8Z" fill="#f9bba2"/>
<path d="M1123.3 509.0 L1130.0 510.0 L1131.0 514.0 L1126.0 516.0Z" fill="#f9bba2"/>
<path d="M1131.0 516.0 L1142.0 511.0 L1150.0 514.0 L1143.0 518.0 L1135.0 527.0 L1131.0 523.0Z" fill="#f9bba2"/>
<path d="M1149.0 521.0 L1153.0 526.0 L1151.0 530.0 L1147.0 527.0Z" fill="#f9bba2"/>
<path d="M1366.5 456.5 L1374.0 455.2 L1399.0 457.8 L1414.0 460.2 L1436.5 461.5 L1441.2 457.8 L1445.0 458.0 L1455.0 450.0 L1458.0 420.0 L1461.0 404.0 L1469.0 404.0 L1472.0 425.0 L1478.0 445.0 L1485.0 451.5 L1480.0 464.0 L1485.0 471.5 L1505.0 476.5 L1507.5 494.0 L1497.5 504.0 L1492.5 524.0 L1500.0 539.0 L1487.5 554.0 L1475.0 574.0 L1465.0 589.0 L1446.5 589.0 L1431.5 597.5 L1416.5 607.5 L1409.0 620.0 L1394.0 627.5 L1379.0 637.5 L1364.0 646.2 L1350.2 652.5 L1349.0 648.8 L1341.5 642.5 L1331.5 640.0 L1322.8 635.0 L1320.2 622.5 L1319.0 612.5 L1314.0 599.0 L1309.0 589.0 L1311.5 586.5 L1316.5 569.0 L1320.2 554.0 L1321.5 536.5 L1329.0 534.0 L1331.5 519.0 L1334.0 499.0 L1339.0 484.0 L1344.0 477.8 L1356.5 479.0 L1374.0 479.0 L1365.2 469.0Z" fill="#f9bba2"/>
<path d="M1245.2 610.0 L1254.0 597.5 L1259.0 593.8 L1261.5 602.5 L1276.5 605.0 L1284.0 615.0 L1286.5 627.5 L1285.2 637.5 L1289.0 647.5 L1291.5 660.0 L1294.0 670.0 L1289.0 680.0 L1281.5 690.0 L1279.0 700.0 L1284.0 710.0 L1274.0 707.5 L1266.5 700.0 L1261.5 690.0 L1256.5 682.5 L1249.0 670.0 L1247.8 650.0 L1244.0 627.5Z" fill="#f9bba2"/>
<path d="M1281.5 588.8 L1296.5 575.0 L1309.0 592.5 L1317.8 607.5 L1320.2 632.5 L1319.0 642.5 L1339.0 645.0 L1346.5 652.5 L1336.5 665.0 L1329.0 680.0 L1309.0 682.5 L1306.5 670.0 L1314.0 660.0 L1306.5 650.0 L1301.5 635.0 L1291.5 620.0 L1286.5 607.5 L1284.0 592.5Z" fill="#f9bba2"/>
<path d="M1249.0 732.5 L1286.5 735.0 L1301.5 742.5 L1306.5 750.0 L1299.0 760.0 L1296.5 747.5 L1249.0 740.0Z" fill="#f9bba2"/>
<path d="M1252.0 686.0 L1262.0 690.0 L1266.0 700.0 L1258.0 702.0 L1252.0 696.0Z" fill="#f9bba2"/>
<path d="M1337.8 272.5 L1351.5 270.0 L1364.0 270.0 L1367.8 275.0 L1360.2 281.2 L1361.5 290.0 L1370.2 293.8 L1366.5 297.5 L1360.2 297.5 L1360.2 307.5 L1356.5 306.2 L1354.0 295.0 L1346.5 292.5 L1341.5 285.0 L1339.0 277.5Z" fill="#f9bba2"/>
<path d="M1336.0 292.0 L1340.0 293.0 L1338.0 298.0Z" fill="#f9bba2"/>
<path d="M1511.2 257.5 L1510.0 267.5 L1502.5 280.0 L1497.5 290.0 L1495.0 300.0 L1490.0 307.5 L1492.5 326.2 L1486.2 326.2 L1485.0 310.0 L1477.5 315.0 L1470.0 322.5 L1457.5 325.0 L1452.5 340.0 L1450.0 352.5 L1457.5 365.0 L1465.0 380.0 L1467.5 395.0 L1467.5 414.0 L1460.0 405.0 L1455.0 390.0 L1435.0 385.0 L1432.5 365.0 L1442.5 355.0 L1446.2 340.0 L1448.8 320.0 L1460.0 315.0 L1475.0 312.5 L1485.0 300.0 L1490.0 287.5 L1500.0 272.5 L1505.0 265.0Z" fill="#f9bba2"/>
<path d="M1480.0 335.0 L1492.5 332.5 L1495.0 340.0 L1482.5 345.0Z" fill="#f9bba2"/>
<path d="M1423.8 337.5 L1431.2 340.0 L1426.2 342.5Z" fill="#f9bba2"/>
<path d="M1431.5 352.5 L1441.5 350.0 L1448.0 365.0 L1448.0 397.5 L1431.5 387.5 L1436.5 375.0Z" fill="#f9bba2"/>
<path d="M1069.2 392.3 L1083.4 400.9 L1091.0 404.7 L1089.1 414.1 L1081.5 417.9 L1075.8 416.0 L1073.0 406.6Z" fill="#f7f8f3"/>
<path d="M1119.5 412.3 L1129.0 406.6 L1127.1 425.5 L1121.4 426.5Z" fill="#f7f8f3"/>
<path d="M1091.0 444.5 L1110.0 445.5 L1108.1 455.9 L1098.6 455.9 L1092.9 450.2Z" fill="#f7f8f3"/>
<path d="M1071.1 471.1 L1081.5 463.5 L1087.2 467.3 L1087.2 480.6 L1085.3 478.6 L1071.1 484.3Z" fill="#f7f8f3"/>
<path d="M1091.0 478.6 L1100.5 480.6 L1100.5 491.9 L1093.0 490.0Z" fill="#f7f8f3"/>
<path d="M1334.0 486.5 L1351.5 481.5 L1341.5 509.0 L1334.0 521.5 L1332.0 500.0Z" fill="#f7f8f3"/>
<path d="M1351.5 486.5 L1356.0 484.0 L1364.0 504.0 L1364.0 514.0 L1359.0 516.5 L1354.0 499.0Z" fill="#f7f8f3"/>
<path d="M1384.0 466.5 L1398.0 464.0 L1396.0 478.0 L1386.0 476.0Z" fill="#f7f8f3"/>
<path d="M1419.0 486.0 L1424.0 484.0 L1428.0 496.0 L1426.0 506.0 L1420.0 500.0Z" fill="#f7f8f3"/>
<path d="M1437.0 490.0 L1445.0 498.0 L1440.0 506.0 L1432.0 500.0Z" fill="#f7f8f3"/>
<path d="M1429.0 509.0 L1440.0 512.0 L1446.0 520.0 L1438.0 522.0Z" fill="#f7f8f3"/>
<path d="M1475.0 436.5 L1490.0 437.0 L1495.0 446.0 L1485.0 452.0 L1479.0 446.0Z" fill="#f7f8f3"/>
<path d="M1483.0 469.0 L1490.0 466.0 L1492.0 474.0Z" fill="#f7f8f3"/>
<path d="M1364.0 595.0 L1374.0 607.5 L1386.5 620.0 L1374.0 637.5 L1364.0 646.2 L1349.0 648.8 L1344.0 637.5 L1356.5 627.5 L1364.0 612.5Z" fill="#f7f8f3"/>
<path d="M1390.0 604.0 L1400.0 601.0 L1404.0 612.0 L1394.0 616.0Z" fill="#f7f8f3"/>
<path d="M1327.0 538.0 L1350.0 538.0 L1352.0 541.0 L1330.0 542.0Z" fill="#f7f8f3"/>
<path d="M1440.0 538.0 L1448.0 535.0 L1452.0 545.0 L1445.0 548.0Z" fill="#f7f8f3"/>
<path d="M1468.0 560.0 L1476.0 556.0 L1478.0 566.0 L1470.0 568.0Z" fill="#f7f8f3"/>
<path d="M1435.0 519.0 L1452.5 516.5 L1450.0 531.5 L1437.5 526.5Z" fill="#cbbde8"/>
<path d="M1404.0 560.0 L1412.0 558.0 L1414.0 566.0 L1406.0 568.0Z" fill="#cbbde8"/>
<path d="M1058.8 452.1L1070.1 448.3L1073 455.9L1071.1 467.3L1060.7 467.3L1057.8 459.7Z" fill="#e3f4fc"/>
<path d="M1081.5 430.3L1091 429.3L1092.9 435L1083.4 436Z" fill="#e3f4fc"/>
<path d="M1239.0 577.5 L1249.0 577.5 L1261.5 582.5 L1264.0 592.5 L1281.5 592.5 L1286.5 595.0 L1299.0 605.0 L1309.0 617.5 L1311.5 632.5 L1306.5 640.0 L1296.5 635.0 L1289.0 625.0 L1284.0 615.0 L1276.5 605.0 L1261.5 602.5 L1254.0 597.5 L1245.2 610.0 L1241.5 625.0 L1237.8 620.0 L1239.0 600.0Z" fill="#e4e58c"/>
<path d="M1301.5 732.5 L1314.0 720.0 L1324.0 712.5 L1341.5 708.8 L1354.0 705.0 L1366.5 697.5 L1374.0 693.0 L1376.0 695.0 L1374.0 707.5 L1364.0 720.0 L1361.5 740.0 L1354.0 750.0 L1334.0 752.5 L1321.5 745.0 L1309.0 742.5Z" fill="#e4e58c"/>
<path d="M1254.0 690.0 L1264.0 695.0 L1261.5 700.0 L1254.0 700.0Z" fill="#e4e58c"/>
<path d="M1256.5 722.0 L1269.0 717.0 L1274.0 722.0 L1261.5 724.5Z" fill="#e4e58c"/>
<path d="M1266.5 727.5 L1281.5 730.0 L1279.0 733.8 L1266.5 732.5Z" fill="#e4e58c"/>
<path d="M1469.0 587.5 L1484.0 580.0 L1506.5 580.0 L1509.0 590.0 L1521.5 595.0 L1534.0 607.5 L1541.5 630.0 L1549.0 650.0 L1541.5 662.5 L1529.0 655.0 L1519.0 650.0 L1506.5 642.5 L1499.0 650.0 L1486.5 646.2 L1476.5 627.5 L1471.5 612.5Z" fill="#e4e58c"/>
<path d="M1529.0 675.0 L1549.0 660.0 L1566.5 662.5 L1579.0 680.0 L1594.0 690.0 L1591.5 705.0 L1579.0 715.0 L1566.5 720.0 L1554.0 730.0 L1546.5 722.5 L1549.0 715.0 L1564.0 710.0 L1556.5 697.5 L1544.0 695.0 L1531.5 690.0Z" fill="#e4e58c"/>
<path d="M1511.5 707.5 L1524.0 720.0 L1541.5 730.0 L1546.5 740.0 L1541.5 760.0 L1536.5 770.0 L1541.5 795.0 L1524.0 800.0 L1506.5 795.0 L1499.0 775.0 L1481.5 775.0 L1476.5 760.0 L1484.0 735.0 L1496.5 720.0Z" fill="#e4e58c"/>
<path d="M1516.5 642.5 L1529.0 647.5 L1531.5 660.0 L1519.0 657.5Z" fill="#e4e58c"/>
<path d="M1470.0 590.0 L1480.0 595.0 L1478.0 605.0Z" fill="#e4e58c"/>
<path d="M1499.0 627.5 L1516.5 627.5 L1519.0 647.5 L1506.5 642.5Z" fill="#f7f8f3"/>
<path d="M1496.0 742.0 L1516.0 737.0 L1520.0 750.0 L1503.0 755.0Z" fill="#f7f8f3"/>
<path d="M1482.0 748.0 L1490.0 745.0 L1492.0 758.0 L1484.0 760.0Z" fill="#f7f8f3"/>
<path d="M1519.0 778.0 L1528.0 775.0 L1530.0 786.0 L1522.0 788.0Z" fill="#f7f8f3"/>
<path d="M1556.0 700.0 L1566.0 697.0 L1570.0 706.0 L1560.0 710.0Z" fill="#f7f8f3"/>
<path d="M1276.0 600.0 L1280.0 602.0 L1284.0 610.0 L1280.0 612.0Z" fill="#f7f8f3"/>
<path d="M1294.0 612.0 L1298.0 614.0 L1300.0 622.0 L1296.0 623.0Z" fill="#f7f8f3"/>
<path d="M1340.0 722.0 L1350.0 720.0 L1348.0 732.0 L1338.0 734.0Z" fill="#f7f8f3"/>
<text x="1257" y="174" font-family="Liberation Sans" font-size="9.5" fill="#777" style="">Bendigo</text>
<text x="1524" y="272" font-family="Liberation Sans" font-size="9.5" fill="#777" style="">Seymour</text>
<text x="1126" y="479" font-family="Liberation Sans" font-size="9.5" fill="#888" style="">Ballarat</text>
<text x="1305" y="514" font-family="Liberation Sans" font-size="9.5" fill="#777" style="">Bacchus</text>
<text x="1312" y="526" font-family="Liberation Sans" font-size="9.5" fill="#777" style="">Marsh</text>
<text x="1356" y="489" font-family="Liberation Sans" font-size="9" fill="#e0b4a4" style="">Sunbury</text>
<text x="1350" y="531" font-family="Liberation Sans" font-size="9" fill="#e2b3a2" style="">Melton</text>
<text x="1404" y="583" font-family="Liberation Sans" font-size="12" fill="#e2b3a2" style="">Melbourne</text>
<text x="1284" y="716" font-family="Liberation Sans" font-size="9" fill="#aaa" style="">Geelong</text>
<text x="1053" y="787" font-family="Liberation Sans" font-size="9" fill="#666" style="">Colac</text>
<text x="1228" y="806" font-family="Liberation Sans" font-size="9" fill="#888" style="">Anglesea</text>
<text x="1504" y="703" font-family="Liberation Sans" font-size="9.5" fill="#888" style="">Frankston</text>
<text x="1510" y="766" font-family="Liberation Sans" font-size="9.5" fill="#999" style="">Hastings</text>
<text x="1434" y="243" font-family="Liberation Sans" font-size="8.5" fill="#999" style="">Puckapunyal</text>
<text x="1448" y="254" font-family="Liberation Sans" font-size="8.5" fill="#999" style="">Military</text>
<text x="1455" y="265" font-family="Liberation Sans" font-size="8.5" fill="#999" style="">Area</text>
<text x="1030" y="122" font-family="Liberation Sans" font-size="8.5" fill="#999" style="">Kooyoora</text>
<text x="1037" y="132" font-family="Liberation Sans" font-size="8.5" fill="#999" style="">State</text>
<text x="1038" y="142" font-family="Liberation Sans" font-size="8.5" fill="#999" style="">Park</text>
<text x="1272" y="462" font-family="Liberation Sans" font-size="8.5" fill="#999" style="">Lerderderg</text>
<text x="1286" y="472" font-family="Liberation Sans" font-size="8.5" fill="#999" style="">State</text>
<text x="1287" y="482" font-family="Liberation Sans" font-size="8.5" fill="#999" style="">Park</text>
<text x="1093" y="557" font-family="Liberation Sans" font-size="8.5" fill="#999" style="">Enfield</text>
<text x="1098" y="567" font-family="Liberation Sans" font-size="8.5" fill="#999" style="">State</text>
<text x="1099" y="577" font-family="Liberation Sans" font-size="8.5" fill="#999" style="">Park</text>
<text x="1550" y="413" font-family="Liberation Sans" font-size="8.5" fill="#999" style="">Kinglake</text>
<text x="1547" y="424" font-family="Liberation Sans" font-size="8.5" fill="#999" style="">National</text>
<text x="1557" y="435" font-family="Liberation Sans" font-size="8.5" fill="#999" style="">Park</text>
<text x="1574" y="777" font-family="Liberation Sans" font-size="8.5" fill="#999" style="">French</text>
<text x="1576" y="788" font-family="Liberation Sans" font-size="8.5" fill="#999" style="">Island</text>
<text x="1570" y="799" font-family="Liberation Sans" font-size="8.5" fill="#999" style="">National</text>
<text x="1580" y="810" font-family="Liberation Sans" font-size="8.5" fill="#999" style="">Park</text>
<text x="1652" y="628" font-family="Liberation Sans" font-size="8.5" fill="#999" style="">Bunyip</text>
<text x="1656" y="639" font-family="Liberation Sans" font-size="8.5" fill="#999" style="">State</text>
<text x="1658" y="650" font-family="Liberation Sans" font-size="8.5" fill="#999" style="">Park</text>
<text x="1426" y="813" font-family="Liberation Sans" font-size="8.5" fill="#999" style="">Mornington</text>
<text x="1430" y="824" font-family="Liberation Sans" font-size="8.5" fill="#999" style="">Peninsula</text>
<text x="1433" y="835" font-family="Liberation Sans" font-size="8.5" fill="#999" style="">National</text>
<text x="1440" y="846" font-family="Liberation Sans" font-size="8.5" fill="#999" style="">Park</text>
<text x="995" y="693" font-family="Liberation Sans" font-size="8.5" fill="#8ab" style="font-style:italic">Lake</text>
<text x="978" y="701" font-family="Liberation Sans" font-size="8.5" fill="#8ab" style="font-style:italic">Corangamite</text>
<text x="1040" y="767" font-family="Liberation Sans" font-size="8.5" fill="#8ab" style="font-style:italic">Lake</text>
<text x="1040" y="775" font-family="Liberation Sans" font-size="8.5" fill="#8ab" style="font-style:italic">Colac</text>
<text x="1253" y="265" font-family="Liberation Sans" font-size="8.5" fill="#999" style="font-style:italic">750 m</text>
<text x="1265" y="414" font-family="Liberation Sans" font-size="8.5" fill="#999" style="font-style:italic">1018 m</text>
<text x="975" y="240" font-family="Liberation Sans" font-size="8.5" fill="#aaa" style="font-style:italic">634 m</text>
<text x="851" y="716" font-family="Liberation Sans" font-size="8.5" fill="#999" style="font-style:italic">310 m</text>
<text x="1172" y="800" font-family="Liberation Sans" font-size="8.5" fill="#999" style="font-style:italic">402 m</text>
<text x="1135" y="868" font-family="Liberation Sans" font-size="8.5" fill="#999" style="font-style:italic">677 m</text>
<text x="994" y="860" font-family="Liberation Sans" font-size="8.5" fill="#999" style="">Carlisle</text>
<text x="1000" y="870" font-family="Liberation Sans" font-size="8.5" fill="#999" style="">State</text>
<text x="1002" y="880" font-family="Liberation Sans" font-size="8.5" fill="#999" style="">Park</text>
<text x="1042" y="862" font-family="Liberation Sans" font-size="8.5" fill="#999" style="">Otway</text>
<text x="1041" y="872" font-family="Liberation Sans" font-size="8.5" fill="#999" style="">Forest</text>
<text x="1045" y="882" font-family="Liberation Sans" font-size="8.5" fill="#999" style="">Park</text>
<path d="M1066.3 389.5 L1110.0 397.1 L1132.8 399.0 L1129.0 419.8 L1125.2 431.2 L1129.0 444.5 L1151.7 447.4 L1153.6 473.0 L1157.4 478.6 L1153.6 486.2 L1144.1 490.0 L1141.3 503.3 L1147.9 514.7 L1157.4 524.2 L1155.5 535.6 L1136.5 538.4 L1129.0 528.0 L1123.3 509.0 L1121.4 503.3 L1104.3 495.7 L1085.3 478.6 L1071.1 484.3 L1071.1 471.1 L1050.2 467.3 L1057.8 452.1 L1060.7 419.8Z" fill="none" stroke="#3a3a3a" stroke-width="1.5" stroke-linejoin="round"/>
<path d="M1249.0 740.0 L1251.5 720.0 L1252.8 702.5 L1256.5 685.0 L1250.2 680.0 L1247.8 660.0 L1246.5 645.0 L1244.0 632.5 L1236.5 626.2 L1237.8 612.5 L1244.0 600.0 L1239.0 590.0 L1237.8 578.8 L1241.5 576.2 L1261.5 581.2 L1264.0 587.5 L1281.5 588.8 L1284.0 578.8 L1295.2 576.2 L1296.5 573.8 L1301.5 586.2 L1309.0 590.0 L1314.0 599.0 L1309.0 589.0 L1311.5 586.5 L1316.5 569.0 L1320.2 554.0 L1321.5 536.5 L1329.0 534.0 L1331.5 519.0 L1334.0 499.0 L1339.0 484.0 L1344.0 477.8 L1356.5 479.0 L1374.0 479.0 L1365.2 469.0 L1366.5 456.5 L1374.0 455.2 L1399.0 457.8 L1414.0 460.2 L1436.5 461.5 L1441.2 457.8 L1445.0 454.0 L1447.5 429.0 L1451.2 404.0 L1450.0 402.5 L1442.5 395.0 L1431.5 390.0 L1431.5 380.0 L1424.0 375.0 L1424.0 365.0 L1421.5 348.8 L1409.0 350.0 L1389.0 347.5 L1390.2 327.5 L1395.2 320.0 L1391.5 315.0 L1389.0 305.0 L1374.0 307.5 L1346.5 305.0 L1335.2 308.8 L1335.2 295.0 L1339.0 285.0 L1336.5 277.5 L1337.8 271.2 L1354.0 268.8 L1366.5 267.5 L1371.5 271.2 L1381.5 270.0 L1381.5 265.0 L1389.0 258.8 L1399.0 257.5 L1401.5 253.8 L1412.5 250.0 L1416.2 238.8 L1425.0 222.5 L1442.5 213.8 L1457.5 208.8 L1456.2 205.0 L1472.5 203.8 L1490.0 212.5 L1502.5 217.5 L1511.2 225.0 L1513.8 236.2 L1516.2 243.8 L1538.8 244.5 L1547.5 233.8 L1557.5 243.8 L1563.8 250.0 L1565.0 265.0 L1570.0 272.5 L1580.0 262.5 L1592.5 257.5 L1602.5 262.5 L1606.2 270.0 L1600.0 280.0 L1596.2 290.0 L1592.5 300.0 L1570.0 305.0 L1562.5 312.5 L1547.5 320.0 L1546.2 340.0 L1536.2 342.5 L1527.5 355.0 L1526.2 370.0 L1535.0 372.5 L1545.0 380.0 L1556.2 387.5 L1560.0 397.5 L1557.5 414.0 L1550.0 426.5 L1545.0 446.5 L1555.0 456.5 L1565.0 457.8 L1575.0 469.0 L1586.2 474.0 L1586.2 499.0 L1582.5 516.5 L1572.5 534.0 L1563.8 549.0 L1565.0 564.0 L1570.0 579.0 L1572.5 591.5 L1580.0 594.0 L1574.0 597.0 L1569.0 597.5 L1566.5 612.5 L1566.5 635.0 L1589.0 640.0 L1591.5 652.5 L1586.5 670.0 L1594.0 685.0 L1596.5 695.0 L1594.0 710.0 L1596.5 725.0 L1604.0 727.5 L1604.0 735.0 L1594.0 735.0 L1581.5 730.0 L1574.0 732.5 L1571.5 740.0 L1564.0 732.5 L1554.0 737.5 L1549.0 750.0 L1541.5 762.5 L1536.5 767.5 L1539.0 780.0 L1544.0 792.5 L1541.5 797.5 L1547.5 807.0 L1517.5 799.5 L1505.0 807.0 L1487.5 822.0 L1485.0 835.8 L1450.0 842.0 L1442.5 842.0 L1430.0 819.5 L1412.5 799.5 L1371.2 766.5 L1380.0 768.2 L1396.2 773.2 L1400.0 782.0 L1422.5 792.0 L1450.0 787.0 L1470.0 777.0 L1475.0 764.5 L1485.0 749.5 L1485.0 734.5 L1492.5 722.0 L1505.0 709.5 L1513.8 694.5 L1514.0 685.0 L1509.0 662.5 L1499.0 650.0 L1486.5 646.2 L1476.5 627.5 L1471.5 612.5 L1469.0 595.0 L1460.0 589.0 L1446.5 589.0 L1431.5 597.5 L1416.5 607.5 L1409.0 620.0 L1394.0 627.5 L1379.0 637.5 L1364.0 646.2 L1350.2 652.5 L1341.5 657.5 L1331.5 668.8 L1329.0 680.0 L1321.5 682.5 L1309.0 680.0 L1290.2 680.0 L1286.5 687.5 L1282.8 697.5 L1282.8 702.5 L1299.0 706.2 L1301.5 700.0 L1306.5 698.8 L1311.5 705.0 L1321.5 711.2 L1334.0 712.5 L1349.0 707.5 L1362.5 692.0 L1372.5 690.8 L1382.5 694.5 L1390.0 704.5 L1391.2 717.0 L1386.2 729.5 L1385.0 742.0 L1375.0 744.5 L1372.5 749.5 L1365.0 752.0 L1355.0 759.5 L1345.0 754.5 L1336.5 757.5 L1324.0 760.0 L1311.5 758.8 L1299.0 760.0 L1291.5 763.8 L1296.5 746.2 L1274.0 742.5Z" fill="none" stroke="#3a3a3a" stroke-width="1.5" stroke-linejoin="round"/>
<path d="M1309.0 590.0 L1316.5 602.5 L1319.0 612.5 L1320.2 622.5 L1322.8 635.0 L1331.5 640.0 L1341.5 642.5 L1349.0 648.8 L1350.2 652.5" fill="none" stroke="#3a3a3a" stroke-width="1.5" stroke-linejoin="round"/>
<path d="M1441.2 457.8 L1437.5 461.5 L1475.0 462.8 L1477.5 460.2 L1475.0 436.5 L1496.2 437.8 L1502.5 429.0 L1510.0 420.2 L1520.0 425.2 L1530.0 426.5 L1537.5 436.5 L1545.0 446.5" fill="none" stroke="#3a3a3a" stroke-width="1.5" stroke-linejoin="round"/>
<path d="M1550.0 426.5 L1557.5 404.0" fill="none" stroke="#3a3a3a" stroke-width="1.5" stroke-linejoin="round"/>
<circle cx="1407.5" cy="561.5" r="6.2" fill="#8f3f6e" fill-opacity="0.5" stroke="#8f3f6e" stroke-width="4.6"/>
<circle cx="1392" cy="456.5" r="6.2" fill="#4cf03e" fill-opacity="0.72" stroke="#4cf03e" stroke-width="4.6"/>
<circle cx="1396.5" cy="496.5" r="6.2" fill="#4cf03e" fill-opacity="0.72" stroke="#4cf03e" stroke-width="4.6"/>
<circle cx="1389" cy="504" r="6.2" fill="#4cf03e" fill-opacity="0.72" stroke="#4cf03e" stroke-width="4.6"/>
<circle cx="1402" cy="529" r="6.2" fill="#4cf03e" fill-opacity="0.72" stroke="#4cf03e" stroke-width="4.6"/>
<circle cx="1342" cy="528.5" r="6.2" fill="#4cf03e" fill-opacity="0.72" stroke="#4cf03e" stroke-width="4.6"/>
<circle cx="1366.5" cy="527.75" r="6.2" fill="#4cf03e" fill-opacity="0.72" stroke="#4cf03e" stroke-width="4.6"/>
<circle cx="1374" cy="557.75" r="6.2" fill="#4cf03e" fill-opacity="0.72" stroke="#4cf03e" stroke-width="4.6"/>
<circle cx="1339.5" cy="562" r="6.2" fill="#4cf03e" fill-opacity="0.72" stroke="#4cf03e" stroke-width="4.6"/>
<circle cx="1351.5" cy="578.5" r="6.2" fill="#4cf03e" fill-opacity="0.72" stroke="#4cf03e" stroke-width="4.6"/>
<circle cx="1382" cy="585.25" r="6.2" fill="#4cf03e" fill-opacity="0.72" stroke="#4cf03e" stroke-width="4.6"/>
<circle cx="1412.75" cy="557.75" r="6.2" fill="#4cf03e" fill-opacity="0.72" stroke="#4cf03e" stroke-width="4.6"/>
<circle cx="1406.5" cy="567.75" r="6.2" fill="#4cf03e" fill-opacity="0.72" stroke="#4cf03e" stroke-width="4.6"/>
<circle cx="1421.5" cy="565.25" r="6.2" fill="#4cf03e" fill-opacity="0.72" stroke="#4cf03e" stroke-width="4.6"/>
<circle cx="1431.5" cy="569" r="6.2" fill="#4cf03e" fill-opacity="0.72" stroke="#4cf03e" stroke-width="4.6"/>
<circle cx="1439" cy="564" r="6.2" fill="#4cf03e" fill-opacity="0.72" stroke="#4cf03e" stroke-width="4.6"/>
<circle cx="1435.25" cy="586.5" r="6.2" fill="#4cf03e" fill-opacity="0.72" stroke="#4cf03e" stroke-width="4.6"/>
<circle cx="1444" cy="476.5" r="6.2" fill="#4cf03e" fill-opacity="0.72" stroke="#4cf03e" stroke-width="4.6"/>
<circle cx="1448" cy="478.5" r="6.2" fill="#4cf03e" fill-opacity="0.72" stroke="#4cf03e" stroke-width="4.6"/>
<circle cx="1462.5" cy="495.25" r="6.2" fill="#4cf03e" fill-opacity="0.72" stroke="#4cf03e" stroke-width="4.6"/>
<circle cx="1486.25" cy="494.5" r="6.2" fill="#4cf03e" fill-opacity="0.72" stroke="#4cf03e" stroke-width="4.6"/>
<circle cx="1488" cy="545.25" r="6.2" fill="#4cf03e" fill-opacity="0.72" stroke="#4cf03e" stroke-width="4.6"/>
<circle cx="1405" cy="567.75" r="6.2" fill="#4cf03e" fill-opacity="0.72" stroke="#4cf03e" stroke-width="4.6"/>
<circle cx="1416.25" cy="564" r="6.2" fill="#4cf03e" fill-opacity="0.72" stroke="#4cf03e" stroke-width="4.6"/>
<circle cx="1430" cy="569" r="6.2" fill="#4cf03e" fill-opacity="0.72" stroke="#4cf03e" stroke-width="4.6"/>
<circle cx="1440" cy="566.5" r="6.2" fill="#4cf03e" fill-opacity="0.72" stroke="#4cf03e" stroke-width="4.6"/>
<circle cx="1460" cy="566.5" r="6.2" fill="#4cf03e" fill-opacity="0.72" stroke="#4cf03e" stroke-width="4.6"/>
<circle cx="1436.25" cy="587.75" r="6.2" fill="#4cf03e" fill-opacity="0.72" stroke="#4cf03e" stroke-width="4.6"/>
<circle cx="1447.5" cy="596.5" r="6.2" fill="#4cf03e" fill-opacity="0.72" stroke="#4cf03e" stroke-width="4.6"/>
<circle cx="1444" cy="595" r="6.2" fill="#4cf03e" fill-opacity="0.72" stroke="#4cf03e" stroke-width="4.6"/>
<circle cx="1476.5" cy="582.5" r="6.2" fill="#4cf03e" fill-opacity="0.72" stroke="#4cf03e" stroke-width="4.6"/>
<circle cx="1470" cy="575" r="6.2" fill="#4cf03e" fill-opacity="0.72" stroke="#4cf03e" stroke-width="4.6"/>
<circle cx="1455" cy="582" r="6.2" fill="#4cf03e" fill-opacity="0.72" stroke="#4cf03e" stroke-width="4.6"/>
<circle cx="1385.25" cy="452.75" r="6.2" fill="#f3f021" fill-opacity="0.5" stroke="#f3f021" stroke-width="4.6"/>
<circle cx="1405.25" cy="514" r="6.2" fill="#f3f021" fill-opacity="0.5" stroke="#f3f021" stroke-width="4.6"/>
<circle cx="1405.25" cy="521.5" r="6.2" fill="#f3f021" fill-opacity="0.5" stroke="#f3f021" stroke-width="4.6"/>
<circle cx="1375.75" cy="546.5" r="6.2" fill="#f3f021" fill-opacity="0.5" stroke="#f3f021" stroke-width="4.6"/>
<circle cx="1393.25" cy="547.75" r="6.2" fill="#f3f021" fill-opacity="0.5" stroke="#f3f021" stroke-width="4.6"/>
<circle cx="1413.25" cy="544.5" r="6.2" fill="#f3f021" fill-opacity="0.5" stroke="#f3f021" stroke-width="4.6"/>
<circle cx="1441.5" cy="547.75" r="6.2" fill="#f3f021" fill-opacity="0.5" stroke="#f3f021" stroke-width="4.6"/>
<circle cx="1344.5" cy="565.25" r="6.2" fill="#f3f021" fill-opacity="0.5" stroke="#f3f021" stroke-width="4.6"/>
<circle cx="1395.75" cy="597.75" r="6.2" fill="#f3f021" fill-opacity="0.5" stroke="#f3f021" stroke-width="4.6"/>
<circle cx="1428.5" cy="556" r="6.2" fill="#f3f021" fill-opacity="0.5" stroke="#f3f021" stroke-width="4.6"/>
<circle cx="1325.25" cy="621.5" r="6.2" fill="#f3f021" fill-opacity="0.5" stroke="#f3f021" stroke-width="4.6"/>
<circle cx="1462.5" cy="505.25" r="6.2" fill="#f3f021" fill-opacity="0.5" stroke="#f3f021" stroke-width="4.6"/>
<circle cx="1466.25" cy="546.5" r="6.2" fill="#f3f021" fill-opacity="0.5" stroke="#f3f021" stroke-width="4.6"/>
<circle cx="1486.25" cy="564" r="6.2" fill="#f3f021" fill-opacity="0.5" stroke="#f3f021" stroke-width="4.6"/>
<circle cx="1371.5" cy="511.5" r="6.2" fill="#f1a43a" fill-opacity="0.5" stroke="#f1a43a" stroke-width="4.6"/>
<circle cx="1503.75" cy="525.25" r="6.2" fill="#f1a43a" fill-opacity="0.5" stroke="#f1a43a" stroke-width="4.6"/>
<circle cx="1448" cy="572.75" r="6.2" fill="#f1a43a" fill-opacity="0.5" stroke="#f1a43a" stroke-width="4.6"/>
<circle cx="1481.25" cy="567.75" r="6.2" fill="#f1a43a" fill-opacity="0.5" stroke="#f1a43a" stroke-width="4.6"/>
<circle cx="1483.75" cy="527.75" r="6.2" fill="#8f3f6e" fill-opacity="0.5" stroke="#8f3f6e" stroke-width="4.6"/>
<circle cx="1467.5" cy="515.25" r="6.2" fill="#4cf03e" fill-opacity="0.72" stroke="#4cf03e" stroke-width="4.6"/>
<circle cx="1468.75" cy="521.5" r="6.2" fill="#4cf03e" fill-opacity="0.72" stroke="#4cf03e" stroke-width="4.6"/>
<circle cx="1508.75" cy="497.75" r="6.2" fill="#4cf03e" fill-opacity="0.72" stroke="#4cf03e" stroke-width="4.6"/>
<circle cx="1510" cy="502.75" r="6.2" fill="#4cf03e" fill-opacity="0.72" stroke="#4cf03e" stroke-width="4.6"/>
<circle cx="1507.5" cy="514" r="6.2" fill="#4cf03e" fill-opacity="0.72" stroke="#4cf03e" stroke-width="4.6"/>
<circle cx="1460" cy="556.5" r="6.2" fill="#4cf03e" fill-opacity="0.72" stroke="#4cf03e" stroke-width="4.6"/>
<circle cx="1470" cy="554" r="6.2" fill="#4cf03e" fill-opacity="0.72" stroke="#4cf03e" stroke-width="4.6"/>
<circle cx="1475" cy="564" r="6.2" fill="#4cf03e" fill-opacity="0.72" stroke="#4cf03e" stroke-width="4.6"/>
<circle cx="1463.75" cy="574" r="6.2" fill="#4cf03e" fill-opacity="0.72" stroke="#4cf03e" stroke-width="4.6"/>
<circle cx="1478.75" cy="581.5" r="6.2" fill="#4cf03e" fill-opacity="0.72" stroke="#4cf03e" stroke-width="4.6"/>
</g></svg>
<div style="position:absolute;left:772px;top:116px;width:22px;height:21.5px;background:#fff;border-radius:2px;box-shadow:0 1px 4px rgba(0,0,0,0.45)"></div>
<svg style="left:772px;top:116px" width="22" height="22"><circle cx="9.9" cy="8.6" r="4.6" fill="none" stroke="#111" stroke-width="1.9"/><path d="M13.2 12L16.6 15.2" stroke="#111" stroke-width="2.4" stroke-linecap="round"/></svg>
<div style="position:absolute;left:772.5px;top:146.3px;width:39px;height:39px;background:#fff;border:1px solid rgba(0,0,0,0.25);box-sizing:border-box;border-radius:4px"></div>
<svg style="left:772px;top:144.5px" width="40" height="40">
<path d="M21 20.8L32 26.6L21 32.4L10 26.6Z" fill="#a9a9a9"/>
<path d="M21 17.2L32 23L21 28.8L10 23Z" fill="#bcbcbc" stroke="#e8e8e8" stroke-width="0.7"/>
<path d="M21 12.2L32 18L21 23.8L10 18Z" fill="#cfcfcf" stroke="#b0b0b0" stroke-width="0.6"/>
<path d="M21 14.6L27.4 18L21 21.4L14.6 18Z" fill="#dadada"/>
</svg>
<div style="position:absolute;left:772.3px;top:193.8px;width:174px;height:70px;background:rgba(255,255,255,0.82);border-radius:5px;box-shadow:0 0 12px rgba(0,0,0,0.18)"></div>
<div style="position:absolute;left:779px;top:199px;width:14.7px;height:15px;background:#a1a1a1"></div>
<div class="t" style="left:800.4px;top:199.14px;font:400 12.3px/16px 'Liberation Sans',sans-serif;color:#555;letter-spacing:-0.36px;">Anderson Creek Formation</div>
<div style="position:absolute;left:779px;top:214px;width:14.7px;height:15px;background:#e1e15a"></div>
<div class="t" style="left:800.4px;top:214.27px;font:400 12.3px/16px 'Liberation Sans',sans-serif;color:#555;letter-spacing:-0.36px;">Brighton Group</div>
<div style="position:absolute;left:779px;top:229px;width:14.7px;height:15px;background:#fa9e7c"></div>
<div class="t" style="left:800.4px;top:229.40px;font:400 12.3px/16px 'Liberation Sans',sans-serif;color:#555;letter-spacing:-0.36px;">Newer Volcanic Group</div>
<div style="position:absolute;left:779px;top:244px;width:14.7px;height:15px;background:#b79ee0"></div>
<div class="t" style="left:800.4px;top:244.53px;font:400 12.3px/16px 'Liberation Sans',sans-serif;color:#555;letter-spacing:-0.36px;">Upper Silurian Formation</div>
<div style="position:absolute;left:772.3px;top:272px;width:178px;height:102px;background:rgba(255,255,255,0.82);border-radius:5px;box-shadow:0 0 12px rgba(0,0,0,0.18)"></div>
<div class="t" style="left:779.2px;top:277.24px;font:700 12.3px/16px 'Liberation Sans',sans-serif;color:#555;letter-spacing:-0.36px;">Nickel</div>
<div class="t" style="left:779.2px;top:291.94px;font:700 12.3px/16px 'Liberation Sans',sans-serif;color:#555;letter-spacing:-0.36px;">Concentration Range – mg/kg</div>
<div style="position:absolute;left:779px;top:309.9px;width:14.7px;height:15px;background:#a3f59a"></div>
<div class="t" style="left:800.4px;top:310.24px;font:400 12.3px/16px 'Liberation Sans',sans-serif;color:#555;letter-spacing:-0.36px;">0 – 50</div>
<div style="position:absolute;left:779px;top:324.9px;width:14.7px;height:15px;background:#f8eca0"></div>
<div class="t" style="left:800.4px;top:325.34px;font:400 12.3px/16px 'Liberation Sans',sans-serif;color:#555;letter-spacing:-0.36px;">50 – 100</div>
<div style="position:absolute;left:779px;top:339.9px;width:14.7px;height:15px;background:#f7cd9a"></div>
<div class="t" style="left:800.4px;top:340.44px;font:400 12.3px/16px 'Liberation Sans',sans-serif;color:#555;letter-spacing:-0.36px;">100 – 150</div>
<div style="position:absolute;left:779px;top:354.9px;width:14.7px;height:15px;background:#d6aab6"></div>
<div class="t" style="left:800.4px;top:355.54px;font:400 12.3px/16px 'Liberation Sans',sans-serif;color:#555;letter-spacing:-0.36px;">150 – 200</div>
</body></html>
